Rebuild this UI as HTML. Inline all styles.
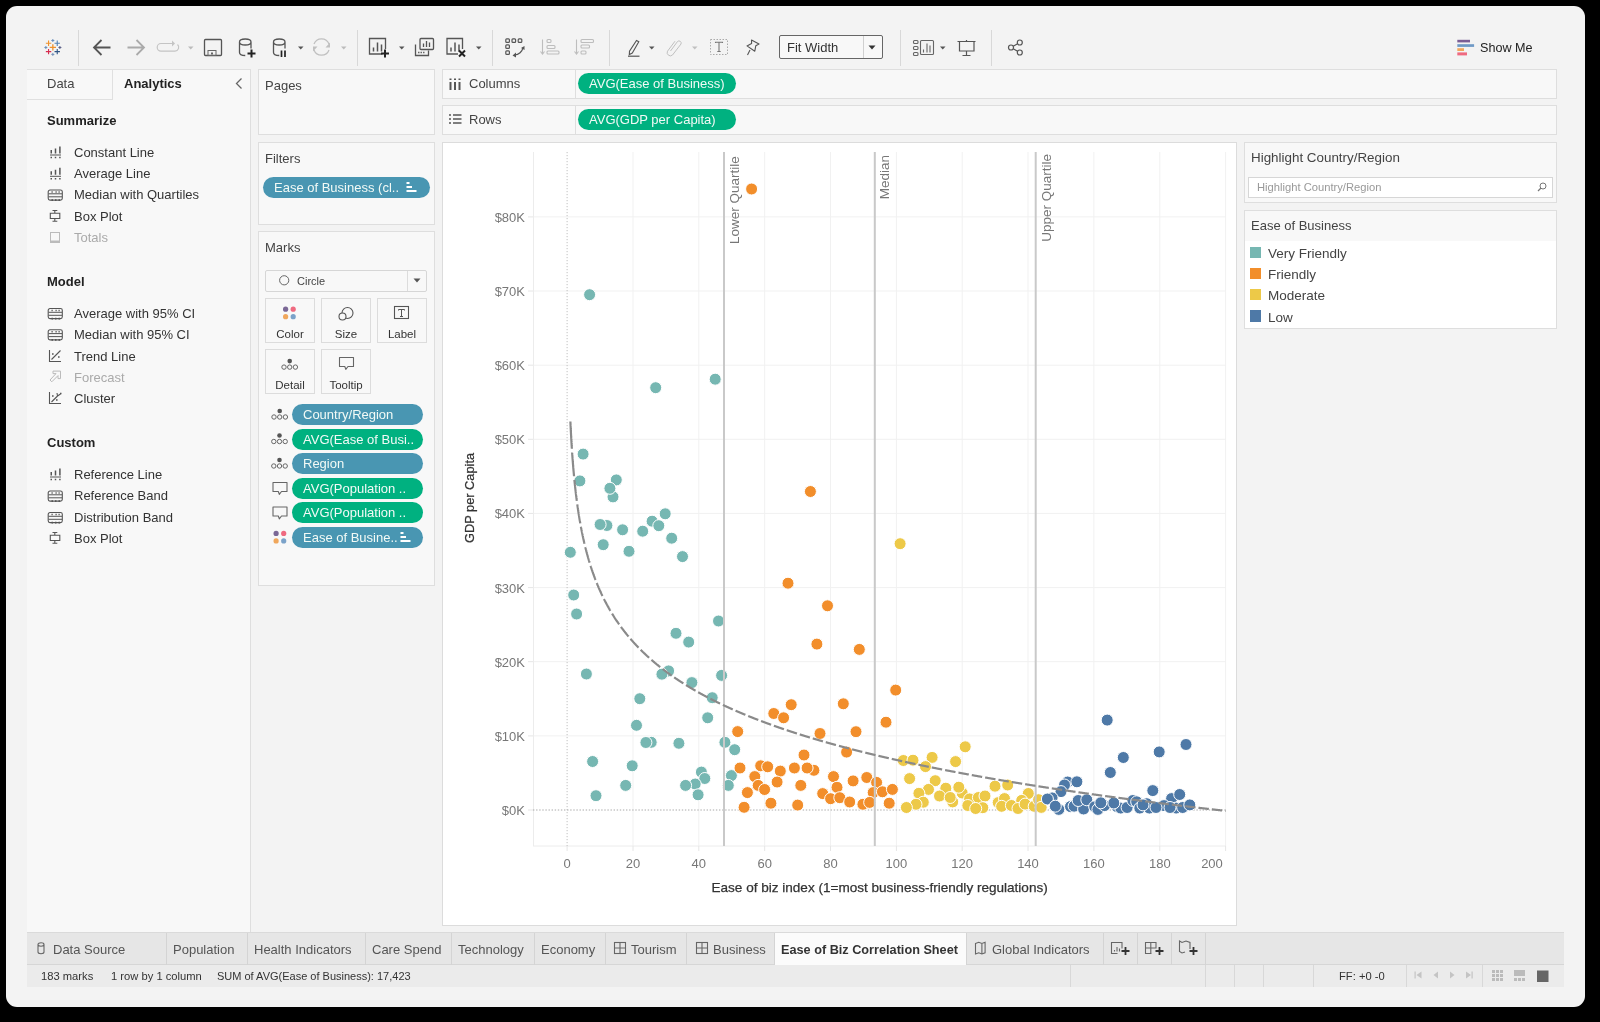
<!DOCTYPE html>
<html><head><meta charset="utf-8">
<style>
*{box-sizing:border-box;margin:0;padding:0}
html,body{width:1600px;height:1022px;overflow:hidden;background:#000;font-family:"Liberation Sans",sans-serif;color:#333}
.a{position:absolute}
#win{position:absolute;left:6px;top:6px;width:1579px;height:1001px;background:#f3f3f3;border-radius:11px;overflow:hidden}
.t{position:absolute;white-space:nowrap;font-size:13px;line-height:16px}
.sep{position:absolute;top:30px;width:1px;height:36px;background:#d8d8d8}
.card{position:absolute;background:#f8f8f8;border:1px solid #dedede}
.pill{position:absolute;height:21px;border-radius:11px;color:#f2faf6;font-size:13px;line-height:21px;white-space:nowrap;padding-left:11px}
.pg{background:#00b180}
.pb{background:#4996b2}
.it{position:absolute;left:74px;font-size:13px;color:#333;white-space:nowrap;line-height:16px}
.ic{position:absolute;left:47px}
.hd{position:absolute;left:47px;font-size:13px;font-weight:bold;color:#222;white-space:nowrap;line-height:16px}
.btn{position:absolute;background:#f8f8f8;border:1px solid #dcdcdc;width:50px;height:45px}
.btn span{position:absolute;left:0;right:0;text-align:center;font-size:11.5px;color:#333;bottom:1px;line-height:14px}
.tab{position:absolute;top:933px;height:32px;font-size:13px;color:#555;line-height:34px;white-space:nowrap;border-right:1px solid #d4d4d4}
</style></head><body>
<div id="root" style="position:absolute;left:0;top:0;width:1600px;height:1022px;will-change:transform;overflow:hidden">
<div id="win"></div>
<!-- toolbar -->
<div class="sep" style="left:78px"></div>
<div class="sep" style="left:357px"></div>
<div class="sep" style="left:492px"></div>
<div class="sep" style="left:609px"></div>
<div class="sep" style="left:900px"></div>
<div class="sep" style="left:991px"></div>
<svg class="a" style="left:0;top:0" width="1600" height="70" viewBox="0 0 1600 70">
 <!-- tableau logo -->
 <g stroke-linecap="butt">
  <path d="M52.84 44.3v6.3M49.7 47.47h6.3" stroke="#f0922c" stroke-width="1.3"/>
  <path d="M48.56 40.5v5.4M45.86 43.2h5.4" stroke="#f0922c" stroke-width="1.1"/>
  <path d="M57.24 40.5v5.4M54.54 43.2h5.4" stroke="#5281b5" stroke-width="1.1"/>
  <path d="M48.56 48.9v5.4M45.86 51.63h5.4" stroke="#d62c4f" stroke-width="1.1"/>
  <path d="M57.24 48.9v5.4M54.54 51.63h5.4" stroke="#2f5585" stroke-width="1.1"/>
  <path d="M52.84 39v3M51.34 40.5h3" stroke="#6a8fbd" stroke-width="1"/>
  <path d="M52.84 52.9v3M51.34 54.4h3" stroke="#7290b8" stroke-width="1"/>
  <path d="M45.87 46v3M44.37 47.47h3" stroke="#6a8fbd" stroke-width="1"/>
  <path d="M59.9 46v3M58.4 47.47h3" stroke="#5a5f87" stroke-width="1"/>
 </g>
 <!-- back / forward -->
 <path d="M110.5 47.5H94M101.5 40L94 47.5L101.5 55" fill="none" stroke="#555" stroke-width="1.8"/>
 <path d="M127.5 47.5H144M136.5 40L144 47.5L136.5 55" fill="none" stroke="#aaa" stroke-width="1.8"/>
 <!-- redo loop -->
 <path d="M172 43.5h-11a3.8 3.8 0 0 0 0 7.6h14a3.8 3.8 0 0 0 2.5 -6.6" fill="none" stroke="#c4c4c4" stroke-width="1.2"/>
 <path d="M172 40.5v6l3 -3z" fill="#c4c4c4"/>
 <path d="M188 46.5h5.5l-2.75 3z" fill="#bbb"/>
 <!-- save -->
 <rect x="204.5" y="39.5" width="17" height="16" rx="1" fill="none" stroke="#555" stroke-width="1.3"/>
 <rect x="208" y="50.5" width="8" height="5" fill="none" stroke="#666" stroke-width="1"/>
 <rect x="211" y="52.5" width="2" height="2" fill="#666"/>
 <!-- db + -->
 <path d="M239.5 42v10.5c0 1.7 2.6 3 5.75 3M251 42v6.5M239.5 42c0 -1.7 2.6 -3 5.75 -3s5.75 1.3 5.75 3s-2.6 3 -5.75 3s-5.75 -1.3 -5.75 -3" fill="none" stroke="#555" stroke-width="1.3"/>
 <path d="M251.5 49.5v8M247.5 53.5h8" stroke="#222" stroke-width="2"/>
 <!-- db pause -->
 <path d="M273.5 42v10.5c0 1.7 2.6 3 5.75 3M285 42v6.5M273.5 42c0 -1.7 2.6 -3 5.75 -3s5.75 1.3 5.75 3s-2.6 3 -5.75 3s-5.75 -1.3 -5.75 -3" fill="none" stroke="#555" stroke-width="1.3"/>
 <path d="M281.5 50.5v6.5M285 50.5v6.5" stroke="#222" stroke-width="1.7"/>
 <path d="M298 46.5h5.5l-2.75 3z" fill="#555"/>
 <!-- refresh -->
 <path d="M314 44a8 8 0 0 1 15 0M329 50a8 8 0 0 1 -15 0" fill="none" stroke="#c0c0c0" stroke-width="1.2"/>
 <path d="M330 42.5v5h-4.5z M313 51.5v-5h4.5z" fill="#c0c0c0"/>
 <path d="M341 46.5h5.5l-2.75 3z" fill="#bbb"/>
 <!-- new worksheet -->
 <path d="M385.5 49V38.5h-16v15.5h13" fill="none" stroke="#555" stroke-width="1.3"/>
 <path d="M373.5 47.5v4M377.5 42.5v9M381.5 44.5v7" stroke="#555" stroke-width="1.5"/>
 <path d="M385 49.5v8M381 53.5h8" stroke="#222" stroke-width="2"/>
 <path d="M399 46.5h5.5l-2.75 3z" fill="#555"/>
 <!-- duplicate -->
 <rect x="420" y="38.5" width="13.5" height="11" rx="1" fill="none" stroke="#555" stroke-width="1.3"/>
 <path d="M415.5 44.5v11h13v-5" fill="none" stroke="#555" stroke-width="1.3"/>
 <path d="M423.5 43.5v3.5M426.5 41v6M429.5 42.5v4.5" stroke="#555" stroke-width="1.3"/>
 <path d="M418 52.5h1.5M420.5 52.5h1.5M423 52.5h1.5" stroke="#666" stroke-width="1.5"/>
 <!-- clear sheet -->
 <path d="M462.5 49V38.5h-15.5v15.5h11" fill="none" stroke="#555" stroke-width="1.3"/>
 <path d="M451 47.5v4M455 42.5v9M459 44.5v7" stroke="#555" stroke-width="1.5"/>
 <path d="M459 50.5l6 6M465 50.5l-6 6" stroke="#222" stroke-width="2"/>
 <path d="M476 46.5h5.5l-2.75 3z" fill="#555"/>
 <!-- swap -->
 <g fill="none" stroke="#555" stroke-width="1.2">
  <rect x="505.8" y="38.8" width="3.6" height="3.6" rx=".9"/><rect x="512" y="38.8" width="3.6" height="3.6" rx=".9"/><rect x="518.2" y="38.8" width="3.6" height="3.6" rx=".9"/>
  <rect x="505.8" y="44.8" width="3.6" height="3.6" rx=".9"/><rect x="505.8" y="50.8" width="3.6" height="3.6" rx=".9"/>
  <path d="M514.5 55a9 9 0 0 0 8.5 -7.5"/>
 </g>
 <path d="M512.5 55.5l3.5 -3v5z M524.5 46l-3.5 2l3.5 2z" fill="#555"/>
 <!-- sort asc -->
 <g fill="none" stroke="#bdbdbd" stroke-width="1.1">
  <path d="M542.5 39.5v14"/><path d="M540.5 51.5l2 2.5l2 -2.5"/>
  <rect x="547" y="39.5" width="4" height="3" rx="1"/><rect x="547" y="45.5" width="8" height="3" rx="1"/><rect x="547" y="51" width="12" height="3" rx="1"/>
  <path d="M576.5 39.5v14"/><path d="M574.5 51.5l2 2.5l2 -2.5"/>
  <rect x="581" y="39.5" width="12.5" height="3" rx="1"/><rect x="581" y="45" width="8.5" height="3" rx="1"/><rect x="581" y="51" width="5" height="3" rx="1"/>
 </g>
 <!-- pen -->
 <path d="M636.5 40.5l2.3 1.3l-6.5 11.3l-3 1.5l0.2 -3.3z" fill="none" stroke="#555" stroke-width="1.1"/>
 <path d="M628 56.2h11.5" stroke="#555" stroke-width="1.2"/>
 <path d="M649 46.5h5.5l-2.75 3z" fill="#555"/>
 <!-- clip -->
 <path d="M670.5 51l7 -9.5a2.2 2.2 0 0 1 3.5 2.5l-8.5 11a3.2 3.2 0 0 1 -5 -3.8l7.5 -10" fill="none" stroke="#c0c0c0" stroke-width="1"/>
 <path d="M692 46.5h5.5l-2.75 3z" fill="#c0c0c0"/>
 <!-- text box -->
 <rect x="710.5" y="39.5" width="17" height="15" fill="none" stroke="#aaa" stroke-width="1" stroke-dasharray="1.5 1.5"/>
 <path d="M715.5 43v-0.8h7v0.8M719 42.2v9.3M717.3 51.5h3.4" fill="none" stroke="#777" stroke-width="1.1"/>
 <!-- pin -->
 <path d="M751.5 40l7.5 4l-3.2 1.7l-1 5.5l-7.8 -5.3l4.6 -2.5z M750 50l-2.5 5" fill="none" stroke="#555" stroke-width="1.1" stroke-linejoin="round"/>
 <!-- fit width -->
 <rect x="779.5" y="35.5" width="103" height="23" rx="1.5" fill="#f8f8f8" stroke="#666" stroke-width="1"/>
 <path d="M863.5 36v22" stroke="#d0d0d0" stroke-width="1"/>
 <path d="M868.5 45.5h7l-3.5 4z" fill="#333"/>
 <!-- cards -->
 <g fill="none" stroke="#666" stroke-width="1.1">
  <rect x="913.5" y="40.5" width="4.5" height="3" rx="1"/><rect x="913.5" y="46.5" width="4.5" height="3" rx="1"/><rect x="913.5" y="52.5" width="4.5" height="3" rx="1"/>
  <rect x="920.5" y="40.5" width="13" height="14" rx="1"/>
 </g>
 <path d="M923.5 49.5v3M927 43.5v9M930 45.5v7" stroke="#666" stroke-width="1.1"/>
 <path d="M940 46.5h5.5l-2.75 3z" fill="#555"/>
 <!-- presentation -->
 <path d="M957.5 41.5h18M959.5 41.5v9.5h14.5v-9.5M966.5 51v4.5M962.5 55.5h8M966.5 40v1.5" fill="none" stroke="#555" stroke-width="1.2"/>
 <!-- share -->
 <g fill="none" stroke="#555" stroke-width="1.2">
  <circle cx="1019.8" cy="42.5" r="2.5"/><circle cx="1011" cy="47.5" r="2.5"/><circle cx="1019.8" cy="52.5" r="2.5"/>
  <path d="M1013.2 46.3l4.4 -2.6M1013.2 48.7l4.4 2.6"/>
 </g>
 <!-- show me -->
 <rect x="1457.3" y="39.8" width="12.7" height="2.6" fill="#7b5e95"/>
 <rect x="1457.3" y="44.2" width="16.8" height="2.7" fill="#6f9ac6"/>
 <rect x="1457.3" y="48.2" width="6.7" height="2.8" fill="#f0a75c"/>
 <rect x="1457.3" y="52.4" width="9.7" height="3" fill="#ef6a80"/>
</svg>
<div class="t" style="left:787px;top:39.5px;color:#333">Fit Width</div>
<div class="t" style="left:1480px;top:40px;color:#222;font-size:12.6px">Show Me</div>
<!-- left panel -->
<div class="a" style="left:27px;top:69px;width:224px;height:864px;background:#f8f8f8;border-top:1px solid #e0e0e0;border-right:1px solid #dedede"></div>
<div class="a" style="left:27px;top:69px;width:86px;height:31px;background:#f8f8f8;border-right:1px solid #e0e0e0;border-bottom:1px solid #e0e0e0;border-top:1px solid #e0e0e0"></div>
<div class="t" style="left:47px;top:76px;color:#444">Data</div>
<div class="t" style="left:124px;top:76px;color:#222;font-weight:bold">Analytics</div>
<svg class="a" style="left:230px;top:74px" width="16" height="18"><path d="M11.5 4.5L6.5 9.5L11.5 14.5" fill="none" stroke="#666" stroke-width="1.3"/></svg>
<div class="hd" style="top:113px">Summarize</div>
<div class="hd" style="top:274px">Model</div>
<div class="hd" style="top:435px">Custom</div>
<div class="it" style="top:145px">Constant Line</div>
<div class="it" style="top:166px">Average Line</div>
<div class="it" style="top:187px">Median with Quartiles</div>
<div class="it" style="top:209px">Box Plot</div>
<div class="it" style="top:230px;color:#aaa">Totals</div>
<div class="it" style="top:306px">Average with 95% CI</div>
<div class="it" style="top:327px">Median with 95% CI</div>
<div class="it" style="top:349px">Trend Line</div>
<div class="it" style="top:370px;color:#aaa">Forecast</div>
<div class="it" style="top:391px">Cluster</div>
<div class="it" style="top:467px">Reference Line</div>
<div class="it" style="top:488px">Reference Band</div>
<div class="it" style="top:510px">Distribution Band</div>
<div class="it" style="top:531px">Box Plot</div>
<svg class="a" style="left:0;top:0" width="260" height="560">
 <defs>
  <g id="iconl" fill="none" stroke="#555"><path d="M3.75 3.5v3.5M8 2v5M12.4 0v7" stroke-width="1.5"/><path d="M2.5 8.5h11" stroke-width="1"/><path d="M3 11h1.5M7.25 11h1.5M11.65 11h1.5" stroke-width="1.5"/></g>
  <g id="iconq" fill="none" stroke="#555"><path d="M2.5 0.5h10.5a1.8 1.8 0 0 1 1.8 1.8v6.5a1.8 1.8 0 0 1 -1.8 1.8h-10.5a1.8 1.8 0 0 1 -1.8 -1.8v-6.5a1.8 1.8 0 0 1 1.8 -1.8z" stroke-width="1.1"/><path d="M1 4.3h13.5M1 7.3h13.5" stroke-width="1"/><path d="M4 2.5h1.2M8 2.5h1.2M11 2.5h1.2M4 10.6h1.5M7.5 10.6h1.5M11 10.6h1.5" stroke-width="1.6"/></g>
  <g id="iconb" fill="none" stroke="#555" stroke-width="1.1"><path d="M2.7 0.5h4.8M5 0.5v2.8M0.5 3.3h9.5v5.2h-9.5z M5 8.5v2.8M2.7 11.3h4.8"/></g>
 </defs>
 <use href="#iconl" x="47.5" y="146.5"/>
 <use href="#iconl" x="47.5" y="167.8"/>
 <use href="#iconq" x="47.5" y="189.5"/>
 <use href="#iconb" x="49.8" y="210"/>
 <rect x="50.5" y="232.5" width="9" height="10" fill="none" stroke="#bbb" stroke-width="1"/><rect x="50" y="240.5" width="10" height="2.5" fill="#bbb"/>
 <use href="#iconq" x="47.5" y="308"/>
 <use href="#iconq" x="47.5" y="329.3"/>
 <path d="M49.5 350v11.5h11.5M51.5 359.5l9 -9" fill="none" stroke="#555" stroke-width="1.1"/>
 <path d="M52 354h1.6M58 357h1.6" stroke="#555" stroke-width="1.6"/>
 <path d="M50 380l1.8 1.8l6.2 -6.2v3h2.5v-7.5h-7.5v2.5h3z" fill="none" stroke="#bbb" stroke-width="1"/>
 <path d="M49.5 392v11.5h11.5M51.5 402l6 -6l3 -2M57.5 396l-0.5 -3" fill="none" stroke="#555" stroke-width="1.1"/>
 <path d="M52 396h1.6M56 400h1.6M60 393.5h1.5" stroke="#555" stroke-width="1.6"/>
 <use href="#iconl" x="47.5" y="468.5"/>
 <use href="#iconq" x="47.5" y="490.5"/>
 <use href="#iconq" x="47.5" y="512"/>
 <use href="#iconb" x="49.8" y="532"/>
</svg>
<!-- middle cards -->
<div class="card" style="left:258px;top:69px;width:177px;height:66px"></div>
<div class="t" style="left:265px;top:78px;color:#444">Pages</div>
<div class="card" style="left:258px;top:142px;width:177px;height:83px"></div>
<div class="t" style="left:265px;top:151px;color:#444">Filters</div>
<div class="pill pb" style="left:263px;top:177px;width:167px">Ease of Business (cl..</div>
<div class="card" style="left:258px;top:231px;width:177px;height:355px"></div>
<div class="t" style="left:265px;top:240px;color:#444">Marks</div>
<div class="a" style="left:265px;top:270px;width:162px;height:22px;background:#f8f8f8;border:1px solid #d6d6d6;border-radius:2px"></div>
<div class="a" style="left:407px;top:271px;width:1px;height:20px;background:#dcdcdc"></div>
<div class="t" style="left:297px;top:273px;font-size:11px;color:#444">Circle</div>
<div class="btn" style="left:265px;top:298px"><span>Color</span></div>
<div class="btn" style="left:321px;top:298px"><span>Size</span></div>
<div class="btn" style="left:377px;top:298px"><span>Label</span></div>
<div class="btn" style="left:265px;top:349px"><span>Detail</span></div>
<div class="btn" style="left:321px;top:349px"><span>Tooltip</span></div>
<div class="pill pb" style="left:292px;top:404px;width:131px">Country/Region</div>
<div class="pill pg" style="left:292px;top:428.7px;width:131px">AVG(Ease of Busi..</div>
<div class="pill pb" style="left:292px;top:453.2px;width:131px">Region</div>
<div class="pill pg" style="left:292px;top:477.7px;width:131px">AVG(Population ..</div>
<div class="pill pg" style="left:292px;top:502.3px;width:131px">AVG(Population ..</div>
<div class="pill pb" style="left:292px;top:526.8px;width:131px">Ease of Busine..</div>
<svg class="a" style="left:0;top:0" width="440" height="560">
 <defs>
  <g id="detail"><circle cx="8.5" cy="2.5" r="2.3" fill="#555"/><circle cx="2.8" cy="8.5" r="2.2" fill="none" stroke="#666" stroke-width="1"/><circle cx="8.5" cy="8.5" r="2.2" fill="none" stroke="#666" stroke-width="1"/><circle cx="14.2" cy="8.5" r="2.2" fill="none" stroke="#666" stroke-width="1"/></g>
  <g id="tip"><path d="M1 1.5h14v9h-5.5l-2.2 2.8l-1 -2.8h-5.3z" fill="none" stroke="#666" stroke-width="1.1" stroke-linejoin="round"/></g>
  <g id="colr"><circle cx="2.6" cy="2.6" r="2.6" fill="#7b6896"/><circle cx="10.2" cy="2.6" r="2.6" fill="#ef6a80"/><circle cx="2.6" cy="10.1" r="2.6" fill="#f0a75c"/><circle cx="10.2" cy="10.1" r="2.6" fill="#7ba2c9"/></g>
  <g id="sorti"><path d="M0 1h3M0 5h5.5M0 9h10" stroke="#fff" stroke-width="1.8"/></g>
 </defs>
 <circle cx="284.2" cy="280.3" r="4.6" fill="none" stroke="#666" stroke-width="1"/>
 <path d="M413.5 278.5h7l-3.5 4z" fill="#555"/>
 <use href="#colr" x="283" y="306.6"/>
 <g fill="none" stroke="#555" stroke-width="1.1"><circle cx="347.5" cy="313" r="5.5"/><circle cx="342.5" cy="316.5" r="3.5" fill="#f8f8f8"/></g>
 <rect x="394.5" y="306.5" width="14" height="12" fill="none" stroke="#555" stroke-width="1.1"/>
 <path d="M398.5 310.5v-1h6v1M401.5 309.5v7M400 316.5h3" fill="none" stroke="#555" stroke-width="1"/>
 <use href="#detail" x="281.2" y="358.6"/>
 <use href="#tip" x="338.5" y="356"/>
 <use href="#detail" x="271.2" y="408.5"/>
 <use href="#detail" x="271" y="433"/>
 <use href="#detail" x="271" y="457.5"/>
 <use href="#tip" x="272" y="481"/>
 <use href="#tip" x="272" y="505.5"/>
 <use href="#colr" x="273.5" y="530.8"/>
 <use href="#sorti" x="406.5" y="182"/>
 <use href="#sorti" x="400.5" y="532"/>
</svg>
<!-- shelves -->
<div class="card" style="left:442px;top:69px;width:1115px;height:30px"></div>
<div class="a" style="left:575px;top:70px;width:1px;height:28px;background:#dedede"></div>
<div class="t" style="left:469px;top:76px;color:#444">Columns</div>
<div class="pill pg" style="left:578px;top:73px;width:158px">AVG(Ease of Business)</div>
<div class="card" style="left:442px;top:105px;width:1115px;height:30px"></div>
<div class="a" style="left:575px;top:106px;width:1px;height:28px;background:#dedede"></div>
<div class="t" style="left:469px;top:112px;color:#444">Rows</div>
<div class="pill pg" style="left:578px;top:109px;width:158px">AVG(GDP per Capita)</div>
<svg class="a" style="left:440px;top:70px" width="30" height="70">
 <path d="M10.5 8.5v1.6M15 8.5v1.6M19.5 8.5v1.6M10.5 12v8M15 12v8M19.5 12v8" stroke="#555" stroke-width="2"/>
 <path d="M9 45h2M9 49h2M9 53h2M13 45h8.5M13 49h8.5M13 53h8.5" stroke="#555" stroke-width="1.6"/>
</svg>
<!-- right panel -->
<div class="card" style="left:1244px;top:142px;width:313px;height:61px"></div>
<div class="t" style="left:1251px;top:150px;color:#444;font-size:13.4px">Highlight Country/Region</div>
<div class="a" style="left:1248px;top:177px;width:305px;height:21px;background:#fff;border:1px solid #d6d6d6"></div>
<div class="t" style="left:1257px;top:180px;color:#999;font-size:11.2px;line-height:14px">Highlight Country/Region</div>
<svg class="a" style="left:1535px;top:180px" width="14" height="14"><circle cx="8" cy="6" r="3" fill="none" stroke="#777" stroke-width="1"/><path d="M6 8l-3 3" stroke="#777" stroke-width="1.2"/></svg>
<div class="card" style="left:1244px;top:210px;width:313px;height:119px;background:#fff"></div>
<div class="a" style="left:1245px;top:211px;width:311px;height:30px;background:#f8f8f8"></div>
<div class="t" style="left:1251px;top:218px;color:#444">Ease of Business</div>
<div class="a" style="left:1250px;top:246.5px;width:11.3px;height:11.3px;background:#76b7b2"></div>
<div class="a" style="left:1250px;top:267.8px;width:11.3px;height:11.3px;background:#f28e2b"></div>
<div class="a" style="left:1250px;top:289px;width:11.3px;height:11.3px;background:#edc948"></div>
<div class="a" style="left:1250px;top:310.3px;width:11.3px;height:11.3px;background:#4e79a7"></div>
<div class="t" style="left:1268px;top:245.8px;color:#444;font-size:13.5px">Very Friendly</div>
<div class="t" style="left:1268px;top:267px;color:#444;font-size:13.5px">Friendly</div>
<div class="t" style="left:1268px;top:288.3px;color:#444;font-size:13.5px">Moderate</div>
<div class="t" style="left:1268px;top:309.6px;color:#444;font-size:13.5px">Low</div>
<div class="a" style="left:442px;top:142px;width:795px;height:784px;background:#fff;border:1px solid #dcdcdc"></div>
<svg class="a" style="left:0;top:0" width="1600" height="1022" viewBox="0 0 1600 1022">
<path d="M633.0 152V846 M698.8 152V846 M764.7 152V846 M830.5 152V846 M896.4 152V846 M962.2 152V846 M1028.0 152V846 M1093.9 152V846 M1159.8 152V846 M1225.6 152V846 M533 735.9H1226 M533 661.7H1226 M533 587.6H1226 M533 513.4H1226 M533 439.3H1226 M533 365.2H1226 M533 291.0H1226 M533 216.9H1226" stroke="#f1f1f1" stroke-width="1" fill="none"/>
<path d="M533.5 152V846M533 846H1226" stroke="#ececec" stroke-width="1" fill="none"/>
<path d="M567.1 846V851 M633.0 846V851 M698.8 846V851 M764.7 846V851 M830.5 846V851 M896.4 846V851 M962.2 846V851 M1028.0 846V851 M1093.9 846V851 M1159.8 846V851 M1225.6 846V851 M528 810.0H533 M528 735.9H533 M528 661.7H533 M528 587.6H533 M528 513.4H533 M528 439.3H533 M528 365.2H533 M528 291.0H533 M528 216.9H533" stroke="#e6e6e6" stroke-width="1" fill="none"/>
<path d="M567.1 152V846" stroke="#c0c0c0" stroke-width="1" stroke-dasharray="1.2 1.8" fill="none"/>
<path d="M533 810.0H1226" stroke="#a8a8a8" stroke-width="1" stroke-dasharray="1.4 1.7" fill="none"/>
<g stroke="#fff" stroke-width="1">
<g fill="#76b7b2"><circle cx="589.6" cy="294.7" r="6"/><circle cx="655.7" cy="387.7" r="6"/><circle cx="715.2" cy="379.2" r="6"/><circle cx="583.1" cy="454.1" r="6"/><circle cx="579.9" cy="480.9" r="6"/><circle cx="616.3" cy="479.9" r="6"/><circle cx="613" cy="496.9" r="6"/><circle cx="609.9" cy="488.3" r="6"/><circle cx="606.9" cy="525.5" r="6"/><circle cx="600.1" cy="524.5" r="6"/><circle cx="622.6" cy="529.8" r="6"/><circle cx="642.7" cy="531.2" r="6"/><circle cx="665.2" cy="513.8" r="6"/><circle cx="652.1" cy="521.2" r="6"/><circle cx="658.8" cy="525.7" r="6"/><circle cx="671.7" cy="538.2" r="6"/><circle cx="682.5" cy="556.6" r="6"/><circle cx="603.2" cy="544.7" r="6"/><circle cx="629" cy="551.3" r="6"/><circle cx="570.3" cy="552.3" r="6"/><circle cx="573.7" cy="595" r="6"/><circle cx="576.6" cy="614" r="6"/><circle cx="718.5" cy="621" r="6"/><circle cx="676" cy="633.3" r="6"/><circle cx="688.7" cy="642.1" r="6"/><circle cx="586.4" cy="674" r="6"/><circle cx="668.6" cy="670.9" r="6"/><circle cx="661.9" cy="674.2" r="6"/><circle cx="721.6" cy="675.4" r="6"/><circle cx="691.9" cy="682.6" r="6"/><circle cx="712.2" cy="697.7" r="6"/><circle cx="639.8" cy="698.7" r="6"/><circle cx="707.7" cy="717.8" r="6"/><circle cx="636.5" cy="725.3" r="6"/><circle cx="651.2" cy="742.3" r="6"/><circle cx="645.9" cy="742.5" r="6"/><circle cx="678.9" cy="743.3" r="6"/><circle cx="724.9" cy="742.3" r="6"/><circle cx="734.7" cy="749.7" r="6"/><circle cx="592.6" cy="761.5" r="6"/><circle cx="632.2" cy="765.8" r="6"/><circle cx="701.4" cy="772.1" r="6"/><circle cx="704.8" cy="778.5" r="6"/><circle cx="731.4" cy="775.6" r="6"/><circle cx="625.7" cy="785.4" r="6"/><circle cx="695.2" cy="784" r="6"/><circle cx="685.6" cy="785.4" r="6"/><circle cx="698.1" cy="794.8" r="6"/><circle cx="728.3" cy="785.4" r="6"/><circle cx="596" cy="795.7" r="6"/></g>
<g fill="#f28e2b"><circle cx="751.6" cy="189" r="6"/><circle cx="810.4" cy="491.5" r="6"/><circle cx="788" cy="583.2" r="6"/><circle cx="827.5" cy="605.8" r="6"/><circle cx="816.9" cy="644.1" r="6"/><circle cx="859.3" cy="649.4" r="6"/><circle cx="895.7" cy="690.1" r="6"/><circle cx="791.2" cy="704.7" r="6"/><circle cx="773.8" cy="713.5" r="6"/><circle cx="783.6" cy="717.8" r="6"/><circle cx="843.3" cy="703.8" r="6"/><circle cx="886" cy="722.2" r="6"/><circle cx="737.7" cy="731.6" r="6"/><circle cx="820" cy="733.5" r="6"/><circle cx="856" cy="731.7" r="6"/><circle cx="846.6" cy="752.1" r="6"/><circle cx="804" cy="755" r="6"/><circle cx="740" cy="768" r="6"/><circle cx="760.7" cy="765.8" r="6"/><circle cx="767.7" cy="766.8" r="6"/><circle cx="780.3" cy="771.1" r="6"/><circle cx="794.4" cy="768" r="6"/><circle cx="813.9" cy="770.3" r="6"/><circle cx="807.1" cy="768" r="6"/><circle cx="754.8" cy="776.6" r="6"/><circle cx="758.2" cy="785.4" r="6"/><circle cx="764.6" cy="789.5" r="6"/><circle cx="777.1" cy="782" r="6"/><circle cx="747.4" cy="792.6" r="6"/><circle cx="800.8" cy="785.4" r="6"/><circle cx="833.5" cy="776.6" r="6"/><circle cx="837" cy="787.3" r="6"/><circle cx="853.1" cy="780.9" r="6"/><circle cx="866.8" cy="777.5" r="6"/><circle cx="876.6" cy="782.4" r="6"/><circle cx="873.2" cy="792.6" r="6"/><circle cx="882.4" cy="791.8" r="6"/><circle cx="892.4" cy="789.4" r="6"/><circle cx="822.7" cy="793.6" r="6"/><circle cx="830.6" cy="798.7" r="6"/><circle cx="839.8" cy="797.7" r="6"/><circle cx="849.7" cy="802" r="6"/><circle cx="862.9" cy="804.3" r="6"/><circle cx="869.7" cy="802.4" r="6"/><circle cx="889.2" cy="803.2" r="6"/><circle cx="744.1" cy="807.3" r="6"/><circle cx="770.9" cy="803.2" r="6"/><circle cx="797.7" cy="805.1" r="6"/></g>
<g fill="#edc948"><circle cx="900.1" cy="543.7" r="6"/><circle cx="965.2" cy="746.8" r="6"/><circle cx="932.1" cy="757.4" r="6"/><circle cx="955.6" cy="761.6" r="6"/><circle cx="903.3" cy="760.5" r="6"/><circle cx="913" cy="760.2" r="6"/><circle cx="925.5" cy="766.6" r="6"/><circle cx="909.6" cy="778.6" r="6"/><circle cx="935.2" cy="780.7" r="6"/><circle cx="995" cy="786.2" r="6"/><circle cx="1007.7" cy="785" r="6"/><circle cx="1028.3" cy="793.5" r="6"/><circle cx="928.5" cy="789.4" r="6"/><circle cx="918.9" cy="793.3" r="6"/><circle cx="945.8" cy="788.2" r="6"/><circle cx="962.2" cy="793" r="6"/><circle cx="958.8" cy="787.2" r="6"/><circle cx="939.5" cy="796" r="6"/><circle cx="952.7" cy="801.9" r="6"/><circle cx="950.2" cy="797.5" r="6"/><circle cx="923.3" cy="802.2" r="6"/><circle cx="916" cy="804.3" r="6"/><circle cx="906.4" cy="807.5" r="6"/><circle cx="969.6" cy="798.9" r="6"/><circle cx="978.4" cy="797.5" r="6"/><circle cx="985" cy="796" r="6"/><circle cx="967.8" cy="805.5" r="6"/><circle cx="982.8" cy="807.7" r="6"/><circle cx="975.7" cy="808.5" r="6"/><circle cx="998.2" cy="802.6" r="6"/><circle cx="1004.5" cy="798.6" r="6"/><circle cx="1001.6" cy="806.3" r="6"/><circle cx="1011.4" cy="805.5" r="6"/><circle cx="1021.7" cy="800.4" r="6"/><circle cx="1018" cy="808.5" r="6"/><circle cx="1025.1" cy="804.1" r="6"/><circle cx="1034.2" cy="806.3" r="6"/><circle cx="1038.6" cy="799.7" r="6"/><circle cx="1041.2" cy="807.4" r="6"/></g>
<g fill="#4e79a7"><circle cx="1107.2" cy="720.1" r="6"/><circle cx="1186" cy="744.5" r="6"/><circle cx="1159.2" cy="751.9" r="6"/><circle cx="1123.3" cy="757.5" r="6"/><circle cx="1110.3" cy="772.5" r="6"/><circle cx="1152.8" cy="790.6" r="6"/><circle cx="1171.6" cy="798.6" r="6"/><circle cx="1179.7" cy="794.5" r="6"/><circle cx="1067.7" cy="782" r="6"/><circle cx="1076.9" cy="781.8" r="6"/><circle cx="1064.5" cy="785" r="6"/><circle cx="1061" cy="791.6" r="6"/><circle cx="1052.1" cy="797.9" r="6"/><circle cx="1047.4" cy="799" r="6"/><circle cx="1058.8" cy="809.4" r="6"/><circle cx="1055.3" cy="806.2" r="6"/><circle cx="1070.5" cy="806.6" r="6"/><circle cx="1074.1" cy="806.2" r="6"/><circle cx="1083.6" cy="809" r="6"/><circle cx="1078.2" cy="800.5" r="6"/><circle cx="1086.8" cy="799.8" r="6"/><circle cx="1094.7" cy="806.8" r="6"/><circle cx="1097.9" cy="809.4" r="6"/><circle cx="1104.6" cy="805.6" r="6"/><circle cx="1100.8" cy="802.8" r="6"/><circle cx="1117" cy="806.6" r="6"/><circle cx="1120.8" cy="808.1" r="6"/><circle cx="1113.8" cy="803" r="6"/><circle cx="1127.1" cy="807.5" r="6"/><circle cx="1132.9" cy="800.5" r="6"/><circle cx="1136.7" cy="801.8" r="6"/><circle cx="1139.8" cy="808.1" r="6"/><circle cx="1146.8" cy="803.7" r="6"/><circle cx="1149.4" cy="808.1" r="6"/><circle cx="1143" cy="804.9" r="6"/><circle cx="1164" cy="805.6" r="6"/><circle cx="1156" cy="807.5" r="6"/><circle cx="1176.1" cy="808.1" r="6"/><circle cx="1170" cy="807.5" r="6"/><circle cx="1182.7" cy="807.5" r="6"/><circle cx="1189.8" cy="804.9" r="6"/></g>
</g>
<path d="M724 152V846M874.8 152V846M1035.7 152V846" stroke="#c9c9c9" stroke-width="2" fill="none"/>
<path d="M570.39 421.43 L570.40 421.65 L570.41 421.87 L570.42 422.09 L570.43 422.31 L570.44 422.53 L570.45 422.75 L570.46 422.97 L570.47 423.19 L570.48 423.41 L570.49 423.63 L570.50 423.85 L570.51 424.07 L570.52 424.29 L570.53 424.51 L570.54 424.73 L570.55 424.96 L570.56 425.18 L570.57 425.40 L570.59 425.62 L570.60 425.84 L570.61 426.06 L570.62 426.28 L570.63 426.50 L570.64 426.72 L570.65 426.94 L570.66 427.16 L570.67 427.38 L570.68 427.60 L570.69 427.82 L570.70 428.04 L570.71 428.26 L570.72 428.48 L570.73 428.70 L570.75 428.92 L570.76 429.14 L570.77 429.36 L570.78 429.58 L570.79 429.80 L570.80 430.02 L570.81 430.24 L570.82 430.46 L570.83 430.68 L570.85 430.90 L570.86 431.12 L570.87 431.34 L570.88 431.56 L570.89 431.78 L570.90 432.00 L570.91 432.22 L570.92 432.44 L570.94 432.66 L570.95 432.88 L570.96 433.10 L570.97 433.32 L570.98 433.54 L570.99 433.76 L571.01 433.98 L571.02 434.20 L571.03 434.42 L571.04 434.64 L571.05 434.86 L571.06 435.08 L571.08 435.30 L571.09 435.52 L571.10 435.74 L571.11 435.96 L571.12 436.18 L571.14 436.40 L571.15 436.62 L571.16 436.84 L571.17 437.06 L571.19 437.29 L571.20 437.51 L571.21 437.73 L571.22 437.95 L571.23 438.17 L571.25 438.39 L571.26 438.61 L571.27 438.83 L571.28 439.05 L571.30 439.27 L571.31 439.49 L571.32 439.71 L571.33 439.93 L571.35 440.15 L571.36 440.37 L571.37 440.59 L571.39 440.81 L571.40 441.03 L571.41 441.25 L571.42 441.47 L571.44 441.69 L571.45 441.91 L571.46 442.13 L571.48 442.35 L571.49 442.57 L571.50 442.79 L571.52 443.01 L571.53 443.23 L571.54 443.45 L571.56 443.67 L571.57 443.89 L571.58 444.11 L571.60 444.33 L571.61 444.55 L571.62 444.77 L571.64 444.99 L571.65 445.21 L571.66 445.43 L571.68 445.65 L571.69 445.87 L571.71 446.09 L571.72 446.31 L571.73 446.53 L571.75 446.75 L571.76 446.97 L571.77 447.19 L571.79 447.41 L571.80 447.63 L571.82 447.85 L571.83 448.07 L571.85 448.29 L571.86 448.51 L571.87 448.73 M572.12 452.48 L572.14 452.70 L572.15 452.92 L572.17 453.14 L572.18 453.36 L572.20 453.58 L572.21 453.80 L572.23 454.02 L572.24 454.24 L572.26 454.46 L572.28 454.68 L572.29 454.90 L572.31 455.12 L572.32 455.34 L572.34 455.56 L572.35 455.78 L572.37 456.00 L572.39 456.22 L572.40 456.44 L572.42 456.66 L572.43 456.88 L572.45 457.10 L572.47 457.32 L572.48 457.54 L572.50 457.76 L572.51 457.98 L572.53 458.20 L572.55 458.42 L572.56 458.64 L572.58 458.86 L572.60 459.08 L572.61 459.30 L572.63 459.52 L572.64 459.74 L572.66 459.96 L572.68 460.18 L572.69 460.40 L572.71 460.62 L572.73 460.84 L572.75 461.06 L572.76 461.28 L572.78 461.50 L572.80 461.72 L572.81 461.94 L572.83 462.17 L572.85 462.39 L572.87 462.61 L572.88 462.83 L572.90 463.05 L572.92 463.27 L572.93 463.49 L572.95 463.71 L572.97 463.93 L572.99 464.15 L573.00 464.37 L573.02 464.59 L573.04 464.81 L573.06 465.03 L573.08 465.25 L573.09 465.47 L573.11 465.69 L573.13 465.91 L573.15 466.13 L573.17 466.35 L573.18 466.57 L573.20 466.79 L573.22 467.01 L573.24 467.23 L573.26 467.45 L573.28 467.67 L573.29 467.89 L573.31 468.11 L573.33 468.33 L573.35 468.55 L573.37 468.77 L573.39 468.99 L573.41 469.21 L573.43 469.43 L573.44 469.65 L573.46 469.87 L573.48 470.09 L573.50 470.31 L573.52 470.53 L573.54 470.75 L573.56 470.97 L573.58 471.19 L573.60 471.41 L573.62 471.63 L573.64 471.85 L573.66 472.07 L573.68 472.29 L573.70 472.51 L573.72 472.73 L573.74 472.95 L573.76 473.17 L573.78 473.39 L573.80 473.61 L573.82 473.83 L573.84 474.05 L573.86 474.27 L573.88 474.49 L573.90 474.72 L573.92 474.94 L573.94 475.16 L573.96 475.38 L573.98 475.60 L574.00 475.82 L574.02 476.04 L574.04 476.26 M574.38 479.78 L574.40 480.00 L574.43 480.22 L574.45 480.44 L574.47 480.66 L574.49 480.88 L574.51 481.10 L574.54 481.32 L574.56 481.54 L574.58 481.76 L574.60 481.98 L574.63 482.20 L574.65 482.42 L574.67 482.64 L574.69 482.86 L574.72 483.08 L574.74 483.30 L574.76 483.52 L574.79 483.74 L574.81 483.96 L574.83 484.18 L574.86 484.40 L574.88 484.62 L574.90 484.84 L574.93 485.06 L574.95 485.28 L574.97 485.50 L575.00 485.72 L575.02 485.94 L575.04 486.16 L575.07 486.38 L575.09 486.60 L575.11 486.82 L575.14 487.05 L575.16 487.27 L575.19 487.49 L575.21 487.71 L575.24 487.93 L575.26 488.15 L575.28 488.37 L575.31 488.59 L575.33 488.81 L575.36 489.03 L575.38 489.25 L575.41 489.47 L575.43 489.69 L575.46 489.91 L575.48 490.13 L575.51 490.35 L575.53 490.57 L575.56 490.79 L575.58 491.01 L575.61 491.23 L575.64 491.45 L575.66 491.67 L575.69 491.89 L575.71 492.11 L575.74 492.33 L575.76 492.55 L575.79 492.77 L575.82 492.99 L575.84 493.21 L575.87 493.43 L575.89 493.65 L575.92 493.87 L575.95 494.09 L575.97 494.31 L576.00 494.53 L576.03 494.75 L576.05 494.97 L576.08 495.19 L576.11 495.41 L576.14 495.63 L576.16 495.85 L576.19 496.07 L576.22 496.29 L576.24 496.51 L576.27 496.73 L576.30 496.95 L576.33 497.17 L576.35 497.39 L576.38 497.61 L576.41 497.83 L576.44 498.05 L576.47 498.27 L576.49 498.49 L576.52 498.71 L576.55 498.93 L576.58 499.15 L576.61 499.37 L576.64 499.60 L576.66 499.82 L576.69 500.04 L576.72 500.26 L576.75 500.48 L576.78 500.70 L576.81 500.92 M577.29 504.44 L577.32 504.66 L577.35 504.88 L577.38 505.10 L577.41 505.32 L577.44 505.54 L577.47 505.76 L577.50 505.98 L577.53 506.20 L577.56 506.42 L577.60 506.64 L577.63 506.86 L577.66 507.08 L577.69 507.30 L577.72 507.52 L577.75 507.74 L577.79 507.96 L577.82 508.18 L577.85 508.40 L577.88 508.62 L577.91 508.84 L577.95 509.06 L577.98 509.28 L578.01 509.50 L578.04 509.72 L578.08 509.94 L578.11 510.16 L578.14 510.38 L578.18 510.60 L578.21 510.82 L578.24 511.04 L578.28 511.26 L578.31 511.48 L578.34 511.70 L578.38 511.93 L578.41 512.15 L578.45 512.37 L578.48 512.59 L578.51 512.81 L578.55 513.03 L578.58 513.25 L578.62 513.47 L578.65 513.69 L578.69 513.91 L578.72 514.13 L578.76 514.35 L578.79 514.57 L578.83 514.79 L578.86 515.01 L578.90 515.23 L578.93 515.45 L578.97 515.67 L579.00 515.89 L579.04 516.11 L579.07 516.33 L579.11 516.55 L579.15 516.77 L579.18 516.99 L579.22 517.21 L579.25 517.43 L579.29 517.65 L579.33 517.87 L579.36 518.09 L579.40 518.31 L579.44 518.53 L579.47 518.75 L579.51 518.97 L579.55 519.19 L579.59 519.41 L579.62 519.63 L579.66 519.85 L579.70 520.07 L579.74 520.29 L579.77 520.51 L579.81 520.73 L579.85 520.95 L579.89 521.17 L579.93 521.39 L579.97 521.61 L580.00 521.83 L580.04 522.05 L580.08 522.27 L580.12 522.49 L580.16 522.71 L580.20 522.93 L580.24 523.15 L580.28 523.37 M580.88 526.68 L580.93 526.90 L580.97 527.12 L581.01 527.34 L581.05 527.56 L581.09 527.78 L581.13 528.00 L581.18 528.22 L581.22 528.44 L581.26 528.66 L581.30 528.88 L581.35 529.10 L581.39 529.32 L581.43 529.54 L581.47 529.76 L581.52 529.98 L581.56 530.20 L581.60 530.42 L581.65 530.64 L581.69 530.86 L581.73 531.08 L581.78 531.30 L581.82 531.52 L581.87 531.74 L581.91 531.96 L581.96 532.18 L582.00 532.40 L582.05 532.62 L582.09 532.84 L582.13 533.06 L582.18 533.28 L582.23 533.50 L582.27 533.72 L582.32 533.94 L582.36 534.16 L582.41 534.38 L582.45 534.60 L582.50 534.82 L582.55 535.04 L582.59 535.26 L582.64 535.48 L582.69 535.70 L582.73 535.92 L582.78 536.14 L582.83 536.36 L582.87 536.58 L582.92 536.81 L582.97 537.03 L583.02 537.25 L583.06 537.47 L583.11 537.69 L583.16 537.91 L583.21 538.13 L583.26 538.35 L583.30 538.57 L583.35 538.79 L583.40 539.01 L583.45 539.23 L583.50 539.45 L583.55 539.67 L583.60 539.89 L583.65 540.11 L583.70 540.33 L583.75 540.55 L583.80 540.77 L583.85 540.99 L583.90 541.21 L583.95 541.43 L584.00 541.65 L584.05 541.87 L584.10 542.09 L584.15 542.31 L584.20 542.53 L584.25 542.75 L584.30 542.97 L584.36 543.19 L584.41 543.41 L584.46 543.63 L584.51 543.85 M585.31 547.15 L585.37 547.37 L585.42 547.59 L585.48 547.81 L585.53 548.03 L585.59 548.25 L585.64 548.47 L585.70 548.69 L585.75 548.91 L585.81 549.13 L585.87 549.36 L585.92 549.58 L585.98 549.80 L586.04 550.02 L586.09 550.24 L586.15 550.46 L586.21 550.68 L586.26 550.90 L586.32 551.12 L586.38 551.34 L586.44 551.56 L586.49 551.78 L586.55 552.00 L586.61 552.22 L586.67 552.44 L586.73 552.66 L586.79 552.88 L586.85 553.10 L586.91 553.32 L586.96 553.54 L587.02 553.76 L587.08 553.98 L587.14 554.20 L587.20 554.42 L587.26 554.64 L587.33 554.86 L587.39 555.08 L587.45 555.30 L587.51 555.52 L587.57 555.74 L587.63 555.96 L587.69 556.18 L587.75 556.40 L587.82 556.62 L587.88 556.84 L587.94 557.06 L588.00 557.28 L588.07 557.50 L588.13 557.72 L588.19 557.94 L588.25 558.16 L588.32 558.38 L588.38 558.60 L588.45 558.82 L588.51 559.04 L588.57 559.26 L588.64 559.48 L588.70 559.70 L588.77 559.92 L588.83 560.14 L588.90 560.36 L588.96 560.58 L589.03 560.80 L589.09 561.02 L589.16 561.24 L589.23 561.46 L589.29 561.69 L589.36 561.91 L589.43 562.13 L589.49 562.35 L589.56 562.57 L589.63 562.79 M590.59 565.87 L590.66 566.09 L590.73 566.31 L590.81 566.53 L590.88 566.75 L590.95 566.97 L591.02 567.19 L591.09 567.41 L591.16 567.63 L591.23 567.85 L591.31 568.07 L591.38 568.29 L591.45 568.51 L591.53 568.73 L591.60 568.95 L591.67 569.17 L591.75 569.39 L591.82 569.61 L591.89 569.83 L591.97 570.05 L592.04 570.27 L592.12 570.49 L592.19 570.71 L592.27 570.93 L592.34 571.15 L592.42 571.37 L592.50 571.59 L592.57 571.81 L592.65 572.03 L592.73 572.25 L592.80 572.47 L592.88 572.69 L592.96 572.91 L593.03 573.13 L593.11 573.35 L593.19 573.57 L593.27 573.79 L593.35 574.01 L593.43 574.24 L593.50 574.46 L593.58 574.68 L593.66 574.90 L593.74 575.12 L593.82 575.34 L593.90 575.56 L593.98 575.78 L594.06 576.00 L594.14 576.22 L594.23 576.44 L594.31 576.66 L594.39 576.88 L594.47 577.10 L594.55 577.32 L594.64 577.54 L594.72 577.76 L594.80 577.98 L594.88 578.20 L594.97 578.42 L595.05 578.64 L595.13 578.86 L595.22 579.08 L595.30 579.30 L595.39 579.52 L595.47 579.74 L595.56 579.96 M596.78 583.04 L596.87 583.26 L596.95 583.48 L597.04 583.70 L597.13 583.92 L597.22 584.14 L597.31 584.36 L597.41 584.58 L597.50 584.80 L597.59 585.02 L597.68 585.24 L597.77 585.46 L597.86 585.68 L597.95 585.90 L598.05 586.12 L598.14 586.34 L598.23 586.57 L598.33 586.79 L598.42 587.01 L598.51 587.23 L598.61 587.45 L598.70 587.67 L598.80 587.89 L598.89 588.11 L598.99 588.33 L599.08 588.55 L599.18 588.77 L599.28 588.99 L599.37 589.21 L599.47 589.43 L599.57 589.65 L599.66 589.87 L599.76 590.09 L599.86 590.31 L599.96 590.53 L600.06 590.75 L600.22 591.11 L600.39 591.48 L600.55 591.84 L600.72 592.20 L600.88 592.56 L601.04 592.92 L601.21 593.27 L601.37 593.63 L601.54 593.98 L601.70 594.33 L601.87 594.68 L602.03 595.03 L602.20 595.37 L602.36 595.72 L602.53 596.06 M604.01 599.07 L604.17 599.40 L604.34 599.72 L604.50 600.05 L604.67 600.37 L604.83 600.69 L605.00 601.01 L605.16 601.33 L605.32 601.65 L605.49 601.96 L605.65 602.28 L605.82 602.59 L605.98 602.90 L606.15 603.21 L606.31 603.52 L606.48 603.83 L606.64 604.14 L606.81 604.44 L606.97 604.75 L607.14 605.05 L607.30 605.35 L607.46 605.65 L607.63 605.95 L607.79 606.25 L607.96 606.55 L608.12 606.84 L608.29 607.14 L608.45 607.43 L608.62 607.72 L608.78 608.01 L608.95 608.30 L609.11 608.59 L609.28 608.88 L609.44 609.16 L609.60 609.45 L609.77 609.73 L609.93 610.02 L610.10 610.30 L610.26 610.58 L610.43 610.86 M612.07 613.60 L612.24 613.87 L612.40 614.14 L612.57 614.40 L612.73 614.67 L612.90 614.93 L613.06 615.20 L613.23 615.46 L613.39 615.72 L613.56 615.98 L613.72 616.24 L613.89 616.50 L614.05 616.76 L614.21 617.02 L614.38 617.27 L614.54 617.53 L614.71 617.78 L614.87 618.04 L615.04 618.29 L615.20 618.54 L615.37 618.79 L615.53 619.04 L615.70 619.29 L615.86 619.54 L616.03 619.79 L616.19 620.04 L616.35 620.28 L616.52 620.53 L616.68 620.77 L616.85 621.02 L617.01 621.26 L617.18 621.50 L617.34 621.74 L617.51 621.98 L617.67 622.22 L617.84 622.46 L618.00 622.70 L618.17 622.94 L618.33 623.17 L618.49 623.41 L618.66 623.64 L618.82 623.88 L618.99 624.11 L619.15 624.34 M620.96 626.86 L621.13 627.08 L621.29 627.31 L621.46 627.53 L621.62 627.75 L621.79 627.97 L621.95 628.19 L622.12 628.41 L622.28 628.63 L622.45 628.85 L622.61 629.07 L622.77 629.29 L622.94 629.51 L623.10 629.72 L623.27 629.94 L623.43 630.15 L623.60 630.37 L623.76 630.58 L623.93 630.79 L624.09 631.01 L624.26 631.22 L624.42 631.43 L624.59 631.64 L624.75 631.85 L624.92 632.06 L625.08 632.27 L625.24 632.48 L625.41 632.69 L625.57 632.89 L625.74 633.10 L625.90 633.31 L626.07 633.51 L626.23 633.72 L626.40 633.92 L626.56 634.12 L626.73 634.33 L626.89 634.53 L627.06 634.73 L627.22 634.93 L627.38 635.14 L627.55 635.34 L627.71 635.54 L627.88 635.73 L628.04 635.93 L628.21 636.13 L628.37 636.33 L628.54 636.53 M630.51 638.85 L630.68 639.04 L630.84 639.23 L631.01 639.42 L631.17 639.61 L631.34 639.80 L631.50 639.99 L631.66 640.18 L631.83 640.36 L631.99 640.55 L632.16 640.74 L632.32 640.92 L632.49 641.11 L632.65 641.29 L632.82 641.48 L632.98 641.66 L633.15 641.84 L633.31 642.03 L633.48 642.21 L633.64 642.39 L633.80 642.57 L633.97 642.75 L634.13 642.94 L634.30 643.12 L634.46 643.30 L634.63 643.48 L634.79 643.65 L634.96 643.83 L635.12 644.01 L635.29 644.19 L635.45 644.37 L635.62 644.54 L635.78 644.72 L635.94 644.89 L636.11 645.07 L636.27 645.25 L636.44 645.42 L636.60 645.59 L636.77 645.77 L636.93 645.94 L637.10 646.12 L637.26 646.29 L637.43 646.46 L637.59 646.63 L637.76 646.80 L637.92 646.97 L638.09 647.15 L638.25 647.32 L638.41 647.49 L638.58 647.65 M640.72 649.82 L640.88 649.99 L641.05 650.15 L641.21 650.31 L641.38 650.48 L641.54 650.64 L641.71 650.80 L641.87 650.96 L642.04 651.13 L642.20 651.29 L642.37 651.45 L642.53 651.61 L642.69 651.77 L642.86 651.93 L643.02 652.09 L643.19 652.25 L643.35 652.41 L643.52 652.57 L643.68 652.72 L643.85 652.88 L644.01 653.04 L644.18 653.20 L644.34 653.35 L644.51 653.51 L644.67 653.67 L644.83 653.82 L645.00 653.98 L645.16 654.13 L645.33 654.29 L645.49 654.44 L645.66 654.60 L645.82 654.75 L645.99 654.90 L646.15 655.06 L646.32 655.21 L646.48 655.36 L646.65 655.51 L646.81 655.67 L646.97 655.82 L647.14 655.97 L647.30 656.12 L647.47 656.27 L647.63 656.42 L647.80 656.57 L647.96 656.72 L648.13 656.87 L648.29 657.02 L648.46 657.17 L648.62 657.32 L648.79 657.47 L648.95 657.61 L649.11 657.76 M651.42 659.80 L651.58 659.94 L651.75 660.08 L651.91 660.23 L652.08 660.37 L652.24 660.51 L652.41 660.65 L652.57 660.80 L652.74 660.94 L652.90 661.08 L653.07 661.22 L653.23 661.36 L653.40 661.50 L653.56 661.64 L653.72 661.78 L653.89 661.92 L654.05 662.06 L654.22 662.20 L654.38 662.34 L654.55 662.48 L654.71 662.61 L654.88 662.75 L655.04 662.89 L655.21 663.03 L655.37 663.16 L655.54 663.30 L655.70 663.44 L655.86 663.57 L656.03 663.71 L656.19 663.85 L656.36 663.98 L656.52 664.12 L656.69 664.25 L656.85 664.39 L657.02 664.52 L657.18 664.66 L657.35 664.79 L657.51 664.92 L657.68 665.06 L657.84 665.19 L658.00 665.33 L658.17 665.46 L658.33 665.59 L658.50 665.72 L658.66 665.86 L658.83 665.99 L658.99 666.12 L659.16 666.25 L659.32 666.38 L659.49 666.51 L659.65 666.64 L659.82 666.78 L659.98 666.91 L660.14 667.04 M662.61 668.96 L662.78 669.09 L662.94 669.21 L663.11 669.34 L663.27 669.47 L663.44 669.59 L663.60 669.72 L663.77 669.84 L663.93 669.97 L664.10 670.09 L664.26 670.22 L664.43 670.34 L664.59 670.47 L664.75 670.59 L664.92 670.71 L665.08 670.84 L665.25 670.96 L665.41 671.08 L665.58 671.21 L665.74 671.33 L665.91 671.45 L666.07 671.57 L666.24 671.70 L666.40 671.82 L666.57 671.94 L666.73 672.06 L666.89 672.18 L667.06 672.30 L667.22 672.43 L667.39 672.55 L667.55 672.67 L667.72 672.79 L667.88 672.91 L668.05 673.03 L668.21 673.15 L668.38 673.27 L668.54 673.39 L668.71 673.50 L668.87 673.62 L669.03 673.74 L669.20 673.86 L669.36 673.98 L669.53 674.10 L669.69 674.22 L669.86 674.33 L670.02 674.45 L670.19 674.57 L670.35 674.69 L670.52 674.80 L670.68 674.92 L670.85 675.04 L671.01 675.15 L671.17 675.27 L671.34 675.39 L671.50 675.50 L671.67 675.62 M674.14 677.33 L674.30 677.45 L674.47 677.56 L674.63 677.67 L674.80 677.78 L674.96 677.90 L675.13 678.01 L675.29 678.12 L675.45 678.23 L675.62 678.34 L675.78 678.46 L675.95 678.57 L676.11 678.68 L676.28 678.79 L676.44 678.90 L676.61 679.01 L676.77 679.12 L676.94 679.23 L677.10 679.34 L677.27 679.45 L677.43 679.56 L677.60 679.67 L677.76 679.78 L677.92 679.89 L678.09 680.00 L678.25 680.11 L678.42 680.22 L678.58 680.32 L678.75 680.43 L678.91 680.54 L679.08 680.65 L679.24 680.76 L679.41 680.86 L679.57 680.97 L679.74 681.08 L679.90 681.19 L680.06 681.29 L680.23 681.40 L680.39 681.51 L680.56 681.62 L680.72 681.72 L680.89 681.83 L681.05 681.93 L681.22 682.04 L681.38 682.15 L681.55 682.25 L681.71 682.36 L681.88 682.46 L682.04 682.57 L682.20 682.67 L682.37 682.78 L682.53 682.88 L682.70 682.99 L682.86 683.09 L683.03 683.20 L683.19 683.30 L683.36 683.41 M685.99 685.05 L686.16 685.15 L686.32 685.26 L686.48 685.36 L686.65 685.46 L686.81 685.56 L686.98 685.66 L687.14 685.76 L687.31 685.86 L687.47 685.96 L687.64 686.06 L687.80 686.16 L687.97 686.26 L688.13 686.36 L688.30 686.46 L688.46 686.56 L688.62 686.66 L688.79 686.76 L688.95 686.86 L689.12 686.96 L689.28 687.06 L689.45 687.16 L689.61 687.26 L689.78 687.36 L689.94 687.46 L690.11 687.55 L690.27 687.65 L690.44 687.75 L690.60 687.85 L690.77 687.95 L690.93 688.04 L691.09 688.14 L691.26 688.24 L691.42 688.34 L691.59 688.43 L691.75 688.53 L691.92 688.63 L692.08 688.73 L692.25 688.82 L692.41 688.92 L692.58 689.02 L692.74 689.11 L692.91 689.21 L693.07 689.30 L693.23 689.40 L693.40 689.50 L693.56 689.59 L693.73 689.69 L693.89 689.78 L694.06 689.88 L694.22 689.97 L694.39 690.07 L694.55 690.16 L694.72 690.26 L694.88 690.35 L695.05 690.45 L695.21 690.54 L695.37 690.64 L695.54 690.73 M698.17 692.22 L698.34 692.32 L698.50 692.41 L698.67 692.50 L698.83 692.59 L699.00 692.68 L699.16 692.77 L699.33 692.87 L699.49 692.96 L699.65 693.05 L699.82 693.14 L699.98 693.23 L700.15 693.32 L700.31 693.41 L700.48 693.50 L700.64 693.59 L700.81 693.69 L700.97 693.78 L701.14 693.87 L701.30 693.96 L701.47 694.05 L701.63 694.14 L701.79 694.23 L701.96 694.32 L702.12 694.41 L702.29 694.50 L702.45 694.58 L702.62 694.67 L702.78 694.76 L702.95 694.85 L703.11 694.94 L703.28 695.03 L703.44 695.12 L703.61 695.21 L703.77 695.30 L703.94 695.39 L704.10 695.47 L704.26 695.56 L704.43 695.65 L704.59 695.74 L704.76 695.83 L704.92 695.91 L705.09 696.00 L705.25 696.09 L705.42 696.18 L705.58 696.26 L705.75 696.35 L705.91 696.44 L706.08 696.53 L706.24 696.61 L706.40 696.70 L706.57 696.79 L706.73 696.87 L706.90 696.96 L707.06 697.05 L707.23 697.13 L707.39 697.22 L707.56 697.31 L707.72 697.39 M710.36 698.76 L710.52 698.84 L710.68 698.92 L710.85 699.01 L711.01 699.09 L711.18 699.18 L711.34 699.26 L711.51 699.34 L711.67 699.43 L711.84 699.51 L712.00 699.60 L712.17 699.68 L712.33 699.76 L712.50 699.85 L712.66 699.93 L712.82 700.01 L712.99 700.09 L713.15 700.18 L713.32 700.26 L713.48 700.34 L713.65 700.43 L713.81 700.51 L713.98 700.59 L714.14 700.67 L714.31 700.76 L714.47 700.84 L714.64 700.92 L714.80 701.00 L714.96 701.08 L715.13 701.17 L715.29 701.25 L715.46 701.33 L715.62 701.41 L715.79 701.49 L715.95 701.57 L716.12 701.65 L716.28 701.74 L716.45 701.82 L716.61 701.90 L716.78 701.98 L716.94 702.06 L717.11 702.14 L717.27 702.22 L717.43 702.30 L717.60 702.38 L717.76 702.46 L717.93 702.54 L718.09 702.62 L718.26 702.70 L718.42 702.78 L718.59 702.86 L718.75 702.94 L718.92 703.02 L719.08 703.10 L719.25 703.18 L719.41 703.26 L719.57 703.34 L719.74 703.42 L719.90 703.50 L720.07 703.58 M722.87 704.91 L723.03 704.99 L723.20 705.07 L723.36 705.14 L723.53 705.22 L723.69 705.30 L723.85 705.37 L724.02 705.45 L724.18 705.53 L724.35 705.61 L724.51 705.68 L724.68 705.76 L724.84 705.84 L725.01 705.91 L725.17 705.99 L725.34 706.07 L725.50 706.14 L725.67 706.22 L725.83 706.30 L725.99 706.37 L726.16 706.45 L726.32 706.52 L726.49 706.60 L726.65 706.68 L726.82 706.75 L726.98 706.83 L727.15 706.90 L727.31 706.98 L727.48 707.05 L727.64 707.13 L727.81 707.20 L727.97 707.28 L728.13 707.35 L728.30 707.43 L728.46 707.50 L728.63 707.58 L728.79 707.65 L728.96 707.73 L729.12 707.80 L729.29 707.88 L729.45 707.95 L729.62 708.03 L729.78 708.10 L729.95 708.18 L730.11 708.25 L730.28 708.33 L730.44 708.40 L730.60 708.47 L730.77 708.55 L730.93 708.62 L731.10 708.69 L731.26 708.77 L731.43 708.84 L731.59 708.92 L731.76 708.99 L731.92 709.06 L732.09 709.14 L732.25 709.21 L732.42 709.28 L732.58 709.36 L732.74 709.43 M735.54 710.66 L735.71 710.73 L735.87 710.80 L736.04 710.88 L736.20 710.95 L736.37 711.02 L736.53 711.09 L736.70 711.16 L736.86 711.23 L737.02 711.30 L737.19 711.38 L737.35 711.45 L737.52 711.52 L737.68 711.59 L737.85 711.66 L738.01 711.73 L738.18 711.80 L738.34 711.87 L738.51 711.94 L738.67 712.01 L738.84 712.08 L739.00 712.15 L739.16 712.22 L739.33 712.29 L739.49 712.36 L739.66 712.43 L739.82 712.50 L739.99 712.57 L740.15 712.64 L740.32 712.71 L740.48 712.78 L740.65 712.85 L740.81 712.92 L740.98 712.99 L741.14 713.06 L741.30 713.13 L741.47 713.20 L741.63 713.27 L741.80 713.34 L741.96 713.41 L742.13 713.48 L742.29 713.55 L742.46 713.62 L742.62 713.69 L742.79 713.76 L742.95 713.82 L743.12 713.89 L743.28 713.96 L743.45 714.03 L743.61 714.10 L743.77 714.17 L743.94 714.24 L744.10 714.30 L744.27 714.37 L744.43 714.44 L744.60 714.51 L744.76 714.58 L744.93 714.65 L745.09 714.71 L745.26 714.78 L745.42 714.85 M748.22 715.99 L748.38 716.06 L748.55 716.13 L748.71 716.19 L748.88 716.26 L749.04 716.33 L749.21 716.39 L749.37 716.46 L749.54 716.53 L749.70 716.59 L749.87 716.66 L750.03 716.72 L750.19 716.79 L750.36 716.86 L750.52 716.92 L750.69 716.99 L750.85 717.05 L751.02 717.12 L751.18 717.19 L751.35 717.25 L751.51 717.32 L751.68 717.38 L751.84 717.45 L752.01 717.51 L752.17 717.58 L752.33 717.65 L752.50 717.71 L752.66 717.78 L752.83 717.84 L752.99 717.91 L753.16 717.97 L753.32 718.04 L753.49 718.10 L753.65 718.17 L753.82 718.23 L753.98 718.30 L754.15 718.36 L754.31 718.42 L754.47 718.49 L754.64 718.55 L754.80 718.62 L754.97 718.68 L755.13 718.75 L755.30 718.81 L755.46 718.88 L755.63 718.94 L755.79 719.00 L755.96 719.07 L756.12 719.13 L756.29 719.20 L756.45 719.26 L756.62 719.32 L756.78 719.39 L756.94 719.45 L757.11 719.52 L757.27 719.58 L757.44 719.64 L757.60 719.71 L757.77 719.77 L757.93 719.83 L758.10 719.90 L758.26 719.96 M761.06 721.03 L761.22 721.09 L761.39 721.15 L761.55 721.22 L761.72 721.28 L761.88 721.34 L762.05 721.40 L762.21 721.46 L762.38 721.53 L762.54 721.59 L762.71 721.65 L762.87 721.71 L763.04 721.77 L763.20 721.83 L763.36 721.90 L763.53 721.96 L763.69 722.02 L763.86 722.08 L764.02 722.14 L764.19 722.20 L764.35 722.27 L764.52 722.33 L764.68 722.39 L764.85 722.45 L765.01 722.51 L765.18 722.57 L765.34 722.63 L765.50 722.69 L765.67 722.75 L765.83 722.82 L766.00 722.88 L766.16 722.94 L766.33 723.00 L766.49 723.06 L766.66 723.12 L766.82 723.18 L766.99 723.24 L767.15 723.30 L767.32 723.36 L767.48 723.42 L767.64 723.48 L767.81 723.54 L767.97 723.60 L768.14 723.66 L768.30 723.72 L768.47 723.78 L768.63 723.84 L768.80 723.90 L768.96 723.96 L769.13 724.02 L769.29 724.08 L769.46 724.14 L769.62 724.20 L769.79 724.26 L769.95 724.32 L770.11 724.38 L770.28 724.44 L770.44 724.50 L770.61 724.56 L770.77 724.62 L770.94 724.68 L771.10 724.74 M773.90 725.74 L774.07 725.80 L774.23 725.86 L774.39 725.92 L774.56 725.97 L774.72 726.03 L774.89 726.09 L775.05 726.15 L775.22 726.21 L775.38 726.26 L775.55 726.32 L775.71 726.38 L775.88 726.44 L776.04 726.50 L776.21 726.55 L776.37 726.61 L776.53 726.67 L776.70 726.73 L776.86 726.79 L777.03 726.84 L777.19 726.90 L777.36 726.96 L777.52 727.02 L777.69 727.07 L777.85 727.13 L778.02 727.19 L778.18 727.25 L778.35 727.30 L778.51 727.36 L778.67 727.42 L778.84 727.47 L779.00 727.53 L779.17 727.59 L779.33 727.65 L779.50 727.70 L779.66 727.76 L779.83 727.82 L779.99 727.87 L780.16 727.93 L780.32 727.99 L780.49 728.04 L780.65 728.10 L780.81 728.16 L780.98 728.21 L781.14 728.27 L781.31 728.33 L781.47 728.38 L781.64 728.44 L781.80 728.50 L781.97 728.55 L782.13 728.61 L782.30 728.67 L782.46 728.72 L782.63 728.78 L782.79 728.83 L782.96 728.89 L783.12 728.95 L783.28 729.00 L783.45 729.06 L783.61 729.11 L783.78 729.17 L783.94 729.23 M786.74 730.17 L786.91 730.22 L787.07 730.28 L787.24 730.33 L787.40 730.39 L787.56 730.44 L787.73 730.50 L787.89 730.55 L788.06 730.61 L788.22 730.66 L788.39 730.72 L788.55 730.77 L788.72 730.83 L788.88 730.88 L789.05 730.94 L789.21 730.99 L789.38 731.04 L789.54 731.10 L789.70 731.15 L789.87 731.21 L790.03 731.26 L790.20 731.32 L790.36 731.37 L790.53 731.42 L790.69 731.48 L790.86 731.53 L791.02 731.59 L791.19 731.64 L791.35 731.69 L791.52 731.75 L791.68 731.80 L791.84 731.86 L792.01 731.91 L792.17 731.96 L792.34 732.02 L792.50 732.07 L792.67 732.12 L792.83 732.18 L793.00 732.23 L793.16 732.29 L793.33 732.34 L793.49 732.39 L793.66 732.45 L793.82 732.50 L793.98 732.55 L794.15 732.61 L794.31 732.66 L794.48 732.71 L794.64 732.77 L794.81 732.82 L794.97 732.87 L795.14 732.93 L795.30 732.98 L795.47 733.03 L795.63 733.08 L795.80 733.14 L795.96 733.19 L796.13 733.24 L796.29 733.30 L796.45 733.35 L796.62 733.40 L796.78 733.45 L796.95 733.51 M799.75 734.40 L799.91 734.45 L800.08 734.50 L800.24 734.55 L800.41 734.60 L800.57 734.66 L800.73 734.71 L800.90 734.76 L801.06 734.81 L801.23 734.86 L801.39 734.91 L801.56 734.97 L801.72 735.02 L801.89 735.07 L802.05 735.12 L802.22 735.17 L802.38 735.22 L802.55 735.28 L802.71 735.33 L802.87 735.38 L803.04 735.43 L803.20 735.48 L803.37 735.53 L803.53 735.58 L803.70 735.63 L803.86 735.69 L804.03 735.74 L804.19 735.79 L804.36 735.84 L804.52 735.89 L804.69 735.94 L804.85 735.99 L805.01 736.04 L805.18 736.09 L805.34 736.14 L805.51 736.19 L805.67 736.25 L805.84 736.30 L806.00 736.35 L806.17 736.40 L806.33 736.45 L806.50 736.50 L806.66 736.55 L806.83 736.60 L806.99 736.65 L807.15 736.70 L807.32 736.75 L807.48 736.80 L807.65 736.85 L807.81 736.90 L807.98 736.95 L808.14 737.00 L808.31 737.05 L808.47 737.10 L808.64 737.15 L808.80 737.20 L808.97 737.25 L809.13 737.30 L809.30 737.35 L809.46 737.40 L809.62 737.45 L809.79 737.50 L809.95 737.55 M812.75 738.39 L812.92 738.44 L813.08 738.49 L813.25 738.54 L813.41 738.59 L813.58 738.64 L813.74 738.69 L813.90 738.74 L814.07 738.79 L814.23 738.84 L814.40 738.89 L814.56 738.93 L814.73 738.98 L814.89 739.03 L815.06 739.08 L815.22 739.13 L815.39 739.18 L815.55 739.23 L815.72 739.28 L815.88 739.32 L816.04 739.37 L816.21 739.42 L816.37 739.47 L816.54 739.52 L816.70 739.57 L816.87 739.62 L817.03 739.66 L817.20 739.71 L817.36 739.76 L817.53 739.81 L817.69 739.86 L817.86 739.91 L818.02 739.95 L818.18 740.00 L818.35 740.05 L818.51 740.10 L818.68 740.15 L818.84 740.19 L819.01 740.24 L819.17 740.29 L819.34 740.34 L819.50 740.39 L819.67 740.43 L819.83 740.48 L820.00 740.53 L820.16 740.58 L820.32 740.63 L820.49 740.67 L820.65 740.72 L820.82 740.77 L820.98 740.82 L821.15 740.86 L821.31 740.91 L821.48 740.96 L821.64 741.01 L821.81 741.05 L821.97 741.10 L822.14 741.15 L822.30 741.20 L822.47 741.24 L822.63 741.29 L822.79 741.34 L822.96 741.39 M825.76 742.19 L825.92 742.23 L826.09 742.28 L826.25 742.33 L826.42 742.37 L826.58 742.42 L826.75 742.47 L826.91 742.51 L827.07 742.56 L827.24 742.61 L827.40 742.65 L827.57 742.70 L827.73 742.75 L827.90 742.79 L828.06 742.84 L828.23 742.88 L828.39 742.93 L828.56 742.98 L828.72 743.02 L828.89 743.07 L829.05 743.12 L829.21 743.16 L829.38 743.21 L829.54 743.25 L829.71 743.30 L829.87 743.35 L830.04 743.39 L830.20 743.44 L830.37 743.48 L830.53 743.53 L830.70 743.58 L830.86 743.62 L831.03 743.67 L831.19 743.71 L831.35 743.76 L831.52 743.81 L831.68 743.85 L831.85 743.90 L832.01 743.94 L832.18 743.99 L832.34 744.03 L832.51 744.08 L832.67 744.13 L832.84 744.17 L833.00 744.22 L833.17 744.26 L833.33 744.31 L833.49 744.35 L833.66 744.40 L833.82 744.44 L833.99 744.49 L834.15 744.53 L834.32 744.58 L834.48 744.62 L834.65 744.67 L834.81 744.72 L834.98 744.76 L835.14 744.81 L835.31 744.85 L835.47 744.90 L835.64 744.94 L835.80 744.99 L835.96 745.03 M838.93 745.84 L839.09 745.88 L839.26 745.93 L839.42 745.97 L839.59 746.01 L839.75 746.06 L839.92 746.10 L840.08 746.15 L840.24 746.19 L840.41 746.24 L840.57 746.28 L840.74 746.32 L840.90 746.37 L841.07 746.41 L841.23 746.46 L841.40 746.50 L841.56 746.55 L841.73 746.59 L841.89 746.63 L842.06 746.68 L842.22 746.72 L842.38 746.77 L842.55 746.81 L842.71 746.85 L842.88 746.90 L843.04 746.94 L843.21 746.98 L843.37 747.03 L843.54 747.07 L843.70 747.12 L843.87 747.16 L844.03 747.20 L844.20 747.25 L844.36 747.29 L844.52 747.33 L844.69 747.38 L844.85 747.42 L845.02 747.47 L845.18 747.51 L845.35 747.55 L845.51 747.60 L845.68 747.64 L845.84 747.68 L846.01 747.73 L846.17 747.77 L846.34 747.81 L846.50 747.86 L846.66 747.90 L846.83 747.94 L846.99 747.99 L847.16 748.03 L847.32 748.07 L847.49 748.12 L847.65 748.16 L847.82 748.20 L847.98 748.25 L848.15 748.29 L848.31 748.33 L848.48 748.37 L848.64 748.42 L848.81 748.46 L848.97 748.50 L849.13 748.55 M852.10 749.31 L852.26 749.36 L852.43 749.40 L852.59 749.44 L852.76 749.48 L852.92 749.53 L853.09 749.57 L853.25 749.61 L853.41 749.65 L853.58 749.70 L853.74 749.74 L853.91 749.78 L854.07 749.82 L854.24 749.86 L854.40 749.91 L854.57 749.95 L854.73 749.99 L854.90 750.03 L855.06 750.07 L855.23 750.12 L855.39 750.16 L855.55 750.20 L855.72 750.24 L855.88 750.28 L856.05 750.33 L856.21 750.37 L856.38 750.41 L856.54 750.45 L856.71 750.49 L856.87 750.54 L857.04 750.58 L857.20 750.62 L857.37 750.66 L857.53 750.70 L857.69 750.74 L857.86 750.79 L858.02 750.83 L858.19 750.87 L858.35 750.91 L858.52 750.95 L858.68 750.99 L858.85 751.03 L859.01 751.08 L859.18 751.12 L859.34 751.16 L859.51 751.20 L859.67 751.24 L859.83 751.28 L860.00 751.32 L860.16 751.37 L860.33 751.41 L860.49 751.45 L860.66 751.49 L860.82 751.53 L860.99 751.57 L861.15 751.61 L861.32 751.65 L861.48 751.70 L861.65 751.74 L861.81 751.78 L861.98 751.82 L862.14 751.86 L862.30 751.90 M865.27 752.63 L865.43 752.68 L865.60 752.72 L865.76 752.76 L865.93 752.80 L866.09 752.84 L866.26 752.88 L866.42 752.92 L866.58 752.96 L866.75 753.00 L866.91 753.04 L867.08 753.08 L867.24 753.12 L867.41 753.16 L867.57 753.20 L867.74 753.24 L867.90 753.28 L868.07 753.32 L868.23 753.36 L868.40 753.40 L868.56 753.44 L868.72 753.48 L868.89 753.52 L869.05 753.56 L869.22 753.60 L869.38 753.64 L869.55 753.68 L869.71 753.72 L869.88 753.76 L870.04 753.80 L870.21 753.84 L870.37 753.88 L870.54 753.92 L870.70 753.96 L870.86 754.00 L871.03 754.04 L871.19 754.08 L871.36 754.12 L871.52 754.16 L871.69 754.20 L871.85 754.24 L872.02 754.28 L872.18 754.32 L872.35 754.36 L872.51 754.40 L872.68 754.44 L872.84 754.48 L873.00 754.52 L873.17 754.56 L873.33 754.60 L873.50 754.64 L873.66 754.68 L873.83 754.72 L873.99 754.75 L874.16 754.79 L874.32 754.83 L874.49 754.87 L874.65 754.91 L874.82 754.95 L874.98 754.99 L875.15 755.03 L875.31 755.07 L875.47 755.11 M878.44 755.81 L878.60 755.85 L878.77 755.89 L878.93 755.93 L879.10 755.97 L879.26 756.01 L879.43 756.04 L879.59 756.08 L879.75 756.12 L879.92 756.16 L880.08 756.20 L880.25 756.24 L880.41 756.28 L880.58 756.32 L880.74 756.35 L880.91 756.39 L881.07 756.43 L881.24 756.47 L881.40 756.51 L881.57 756.55 L881.73 756.58 L881.89 756.62 L882.06 756.66 L882.22 756.70 L882.39 756.74 L882.55 756.78 L882.72 756.82 L882.88 756.85 L883.05 756.89 L883.21 756.93 L883.38 756.97 L883.54 757.01 L883.71 757.04 L883.87 757.08 L884.03 757.12 L884.20 757.16 L884.36 757.20 L884.53 757.24 L884.69 757.27 L884.86 757.31 L885.02 757.35 L885.19 757.39 L885.35 757.43 L885.52 757.46 L885.68 757.50 L885.85 757.54 L886.01 757.58 L886.17 757.62 L886.34 757.65 L886.50 757.69 L886.67 757.73 L886.83 757.77 L887.00 757.81 L887.16 757.84 L887.33 757.88 L887.49 757.92 L887.66 757.96 L887.82 757.99 L887.99 758.03 L888.15 758.07 L888.32 758.11 L888.48 758.14 L888.64 758.18 L888.81 758.22 M891.77 758.89 L891.94 758.93 L892.10 758.97 L892.27 759.01 L892.43 759.04 L892.60 759.08 L892.76 759.12 L892.92 759.15 L893.09 759.19 L893.25 759.23 L893.42 759.27 L893.58 759.30 L893.75 759.34 L893.91 759.38 L894.08 759.41 L894.24 759.45 L894.41 759.49 L894.57 759.53 L894.74 759.56 L894.90 759.60 L895.06 759.64 L895.23 759.67 L895.39 759.71 L895.56 759.75 L895.72 759.78 L895.89 759.82 L896.05 759.86 L896.22 759.89 L896.38 759.93 L896.55 759.97 L896.71 760.00 L896.88 760.04 L897.04 760.08 L897.20 760.11 L897.37 760.15 L897.53 760.19 L897.70 760.22 L897.86 760.26 L898.03 760.30 L898.19 760.33 L898.36 760.37 L898.52 760.41 L898.69 760.44 L898.85 760.48 L899.02 760.52 L899.18 760.55 L899.34 760.59 L899.51 760.63 L899.67 760.66 L899.84 760.70 L900.00 760.73 L900.17 760.77 L900.33 760.81 L900.50 760.84 L900.66 760.88 L900.83 760.92 L900.99 760.95 L901.16 760.99 L901.32 761.02 L901.49 761.06 L901.65 761.10 L901.81 761.13 L901.98 761.17 L902.14 761.21 M905.11 761.85 L905.27 761.89 L905.44 761.92 L905.60 761.96 L905.77 762.00 L905.93 762.03 L906.09 762.07 L906.26 762.10 L906.42 762.14 L906.59 762.17 L906.75 762.21 L906.92 762.25 L907.08 762.28 L907.25 762.32 L907.41 762.35 L907.58 762.39 L907.74 762.42 L907.91 762.46 L908.07 762.49 L908.23 762.53 L908.40 762.57 L908.56 762.60 L908.73 762.64 L908.89 762.67 L909.06 762.71 L909.22 762.74 L909.39 762.78 L909.55 762.81 L909.72 762.85 L909.88 762.88 L910.05 762.92 L910.21 762.95 L910.37 762.99 L910.54 763.02 L910.70 763.06 L910.87 763.10 L911.03 763.13 L911.20 763.17 L911.36 763.20 L911.53 763.24 L911.69 763.27 L911.86 763.31 L912.02 763.34 L912.19 763.38 L912.35 763.41 L912.51 763.45 L912.68 763.48 L912.84 763.52 L913.01 763.55 L913.17 763.59 L913.34 763.62 L913.50 763.66 L913.67 763.69 L913.83 763.73 L914.00 763.76 L914.16 763.80 L914.33 763.83 L914.49 763.87 L914.66 763.90 L914.82 763.94 L914.98 763.97 L915.15 764.00 L915.31 764.04 L915.48 764.07 M918.44 764.70 L918.61 764.73 L918.77 764.77 L918.94 764.80 L919.10 764.83 L919.26 764.87 L919.43 764.90 L919.59 764.94 L919.76 764.97 L919.92 765.01 L920.09 765.04 L920.25 765.07 L920.42 765.11 L920.58 765.14 L920.75 765.18 L920.91 765.21 L921.08 765.25 L921.24 765.28 L921.40 765.31 L921.57 765.35 L921.73 765.38 L921.90 765.42 L922.06 765.45 L922.23 765.48 L922.39 765.52 L922.56 765.55 L922.72 765.59 L922.89 765.62 L923.05 765.65 L923.22 765.69 L923.38 765.72 L923.54 765.76 L923.71 765.79 L923.87 765.82 L924.04 765.86 L924.20 765.89 L924.37 765.93 L924.53 765.96 L924.70 765.99 L924.86 766.03 L925.03 766.06 L925.19 766.10 L925.36 766.13 L925.52 766.16 L925.68 766.20 L925.85 766.23 L926.01 766.26 L926.18 766.30 L926.34 766.33 L926.51 766.37 L926.67 766.40 L926.84 766.43 L927.00 766.47 L927.17 766.50 L927.33 766.53 L927.50 766.57 L927.66 766.60 L927.83 766.63 L927.99 766.67 L928.15 766.70 L928.32 766.73 L928.48 766.77 L928.65 766.80 L928.81 766.83 M931.78 767.43 L931.94 767.47 L932.11 767.50 L932.27 767.53 L932.43 767.57 L932.60 767.60 L932.76 767.63 L932.93 767.67 L933.09 767.70 L933.26 767.73 L933.42 767.77 L933.59 767.80 L933.75 767.83 L933.92 767.86 L934.08 767.90 L934.25 767.93 L934.41 767.96 L934.57 768.00 L934.74 768.03 L934.90 768.06 L935.07 768.10 L935.23 768.13 L935.40 768.16 L935.56 768.19 L935.73 768.23 L935.89 768.26 L936.06 768.29 L936.22 768.33 L936.39 768.36 L936.55 768.39 L936.71 768.42 L936.88 768.46 L937.04 768.49 L937.21 768.52 L937.37 768.55 L937.54 768.59 L937.70 768.62 L937.87 768.65 L938.03 768.68 L938.20 768.72 L938.36 768.75 L938.53 768.78 L938.69 768.82 L938.85 768.85 L939.02 768.88 L939.18 768.91 L939.35 768.95 L939.51 768.98 L939.68 769.01 L939.84 769.04 L940.01 769.08 L940.17 769.11 L940.34 769.14 L940.50 769.17 L940.67 769.20 L940.83 769.24 L941.00 769.27 L941.16 769.30 L941.32 769.33 L941.49 769.37 L941.65 769.40 L941.82 769.43 L941.98 769.46 L942.15 769.50 M945.11 770.07 L945.28 770.11 L945.44 770.14 L945.60 770.17 L945.77 770.20 L945.93 770.23 L946.10 770.27 L946.26 770.30 L946.43 770.33 L946.59 770.36 L946.76 770.39 L946.92 770.43 L947.09 770.46 L947.25 770.49 L947.42 770.52 L947.58 770.55 L947.74 770.58 L947.91 770.62 L948.07 770.65 L948.24 770.68 L948.40 770.71 L948.57 770.74 L948.73 770.78 L948.90 770.81 L949.06 770.84 L949.23 770.87 L949.39 770.90 L949.56 770.93 L949.72 770.97 L949.88 771.00 L950.05 771.03 L950.21 771.06 L950.38 771.09 L950.54 771.12 L950.71 771.15 L950.87 771.19 L951.04 771.22 L951.20 771.25 L951.37 771.28 L951.53 771.31 L951.70 771.34 L951.86 771.38 L952.02 771.41 L952.19 771.44 L952.35 771.47 L952.52 771.50 L952.68 771.53 L952.85 771.56 L953.01 771.60 L953.18 771.63 L953.34 771.66 L953.51 771.69 L953.67 771.72 L953.84 771.75 L954.00 771.78 L954.17 771.81 L954.33 771.85 L954.49 771.88 L954.66 771.91 L954.82 771.94 L954.99 771.97 L955.15 772.00 L955.32 772.03 L955.48 772.06 M958.45 772.62 L958.61 772.65 L958.77 772.68 L958.94 772.72 L959.10 772.75 L959.27 772.78 L959.43 772.81 L959.60 772.84 L959.76 772.87 L959.93 772.90 L960.09 772.93 L960.26 772.96 L960.42 772.99 L960.59 773.02 L960.75 773.05 L960.91 773.08 L961.08 773.12 L961.24 773.15 L961.41 773.18 L961.57 773.21 L961.74 773.24 L961.90 773.27 L962.07 773.30 L962.23 773.33 L962.40 773.36 L962.56 773.39 L962.73 773.42 L962.89 773.45 L963.05 773.48 L963.22 773.51 L963.38 773.54 L963.55 773.57 L963.71 773.61 L963.88 773.64 L964.04 773.67 L964.21 773.70 L964.37 773.73 L964.54 773.76 L964.70 773.79 L964.87 773.82 L965.03 773.85 L965.19 773.88 L965.36 773.91 L965.52 773.94 L965.69 773.97 L965.85 774.00 L966.02 774.03 L966.18 774.06 L966.35 774.09 L966.51 774.12 L966.68 774.15 L966.84 774.18 L967.01 774.21 L967.17 774.24 L967.34 774.27 L967.50 774.30 L967.66 774.33 L967.83 774.36 L967.99 774.39 L968.16 774.42 L968.32 774.45 L968.49 774.48 L968.65 774.51 L968.82 774.55 M971.78 775.09 L971.94 775.12 L972.11 775.15 L972.27 775.17 L972.44 775.20 L972.60 775.23 L972.77 775.26 L972.93 775.29 L973.10 775.32 L973.26 775.35 L973.43 775.38 L973.59 775.41 L973.76 775.44 L973.92 775.47 L974.08 775.50 L974.25 775.53 L974.41 775.56 L974.58 775.59 L974.74 775.62 L974.91 775.65 L975.07 775.68 L975.24 775.71 L975.40 775.74 L975.57 775.77 L975.73 775.80 L975.90 775.83 L976.06 775.86 L976.22 775.89 L976.39 775.92 L976.55 775.95 L976.72 775.98 L976.88 776.01 L977.05 776.04 L977.21 776.07 L977.38 776.09 L977.54 776.12 L977.71 776.15 L977.87 776.18 L978.04 776.21 L978.20 776.24 L978.36 776.27 L978.53 776.30 L978.69 776.33 L978.86 776.36 L979.02 776.39 L979.19 776.42 L979.35 776.45 L979.52 776.48 L979.68 776.51 L979.85 776.54 L980.01 776.57 L980.18 776.59 L980.34 776.62 L980.51 776.65 L980.67 776.68 L980.83 776.71 L981.00 776.74 L981.16 776.77 L981.33 776.80 L981.49 776.83 L981.66 776.86 L981.82 776.89 L981.99 776.92 L982.15 776.95 M985.11 777.47 L985.28 777.50 L985.44 777.53 L985.61 777.56 L985.77 777.58 L985.94 777.61 L986.10 777.64 L986.27 777.67 L986.43 777.70 L986.60 777.73 L986.76 777.76 L986.93 777.79 L987.09 777.81 L987.25 777.84 L987.42 777.87 L987.58 777.90 L987.75 777.93 L987.91 777.96 L988.08 777.99 L988.24 778.02 L988.41 778.04 L988.57 778.07 L988.74 778.10 L988.90 778.13 L989.07 778.16 L989.23 778.19 L989.39 778.22 L989.56 778.25 L989.72 778.27 L989.89 778.30 L990.05 778.33 L990.22 778.36 L990.38 778.39 L990.55 778.42 L990.71 778.45 L990.88 778.47 L991.04 778.50 L991.21 778.53 L991.37 778.56 L991.53 778.59 L991.70 778.62 L991.86 778.65 L992.03 778.67 L992.19 778.70 L992.36 778.73 L992.52 778.76 L992.69 778.79 L992.85 778.82 L993.02 778.84 L993.18 778.87 L993.35 778.90 L993.51 778.93 L993.68 778.96 L993.84 778.99 L994.00 779.01 L994.17 779.04 L994.33 779.07 L994.50 779.10 L994.66 779.13 L994.83 779.16 L994.99 779.18 L995.16 779.21 L995.32 779.24 L995.49 779.27 M998.45 779.78 L998.61 779.80 L998.78 779.83 L998.94 779.86 L999.11 779.89 L999.27 779.92 L999.44 779.94 L999.60 779.97 L999.77 780.00 L999.93 780.03 L1000.10 780.06 L1000.26 780.08 L1000.42 780.11 L1000.59 780.14 L1000.75 780.17 L1000.92 780.20 L1001.08 780.22 L1001.25 780.25 L1001.41 780.28 L1001.58 780.31 L1001.74 780.34 L1001.91 780.36 L1002.07 780.39 L1002.24 780.42 L1002.40 780.45 L1002.56 780.47 L1002.73 780.50 L1002.89 780.53 L1003.06 780.56 L1003.22 780.59 L1003.39 780.61 L1003.55 780.64 L1003.72 780.67 L1003.88 780.70 L1004.05 780.72 L1004.21 780.75 L1004.38 780.78 L1004.54 780.81 L1004.70 780.83 L1004.87 780.86 L1005.03 780.89 L1005.20 780.92 L1005.36 780.95 L1005.53 780.97 L1005.69 781.00 L1005.86 781.03 L1006.02 781.06 L1006.19 781.08 L1006.35 781.11 L1006.52 781.14 L1006.68 781.17 L1006.85 781.19 L1007.01 781.22 L1007.17 781.25 L1007.34 781.28 L1007.50 781.30 L1007.67 781.33 L1007.83 781.36 L1008.00 781.39 L1008.16 781.41 L1008.33 781.44 L1008.49 781.47 L1008.66 781.50 L1008.82 781.52 M1011.78 782.01 L1011.95 782.04 L1012.11 782.07 L1012.28 782.10 L1012.44 782.12 L1012.61 782.15 L1012.77 782.18 L1012.94 782.20 L1013.10 782.23 L1013.27 782.26 L1013.43 782.29 L1013.59 782.31 L1013.76 782.34 L1013.92 782.37 L1014.09 782.39 L1014.25 782.42 L1014.42 782.45 L1014.58 782.48 L1014.75 782.50 L1014.91 782.53 L1015.08 782.56 L1015.24 782.58 L1015.41 782.61 L1015.57 782.64 L1015.73 782.66 L1015.90 782.69 L1016.06 782.72 L1016.23 782.75 L1016.39 782.77 L1016.56 782.80 L1016.72 782.83 L1016.89 782.85 L1017.05 782.88 L1017.22 782.91 L1017.38 782.93 L1017.55 782.96 L1017.71 782.99 L1017.87 783.01 L1018.04 783.04 L1018.20 783.07 L1018.37 783.09 L1018.53 783.12 L1018.70 783.15 L1018.86 783.18 L1019.03 783.20 L1019.19 783.23 L1019.36 783.26 L1019.52 783.28 L1019.69 783.31 L1019.85 783.34 L1020.02 783.36 L1020.18 783.39 L1020.34 783.42 L1020.51 783.44 L1020.67 783.47 L1020.84 783.50 L1021.00 783.52 L1021.17 783.55 L1021.33 783.58 L1021.50 783.60 L1021.66 783.63 L1021.83 783.66 L1021.99 783.68 L1022.16 783.71 M1025.12 784.19 L1025.28 784.21 L1025.45 784.24 L1025.61 784.27 L1025.78 784.29 L1025.94 784.32 L1026.11 784.34 L1026.27 784.37 L1026.44 784.40 L1026.60 784.42 L1026.76 784.45 L1026.93 784.48 L1027.09 784.50 L1027.26 784.53 L1027.42 784.55 L1027.59 784.58 L1027.75 784.61 L1027.92 784.63 L1028.08 784.66 L1028.25 784.69 L1028.41 784.71 L1028.58 784.74 L1028.74 784.76 L1028.90 784.79 L1029.07 784.82 L1029.23 784.84 L1029.40 784.87 L1029.56 784.90 L1029.73 784.92 L1029.89 784.95 L1030.06 784.97 L1030.22 785.00 L1030.39 785.03 L1030.55 785.05 L1030.72 785.08 L1030.88 785.10 L1031.04 785.13 L1031.21 785.16 L1031.37 785.18 L1031.54 785.21 L1031.70 785.24 L1031.87 785.26 L1032.03 785.29 L1032.20 785.31 L1032.36 785.34 L1032.53 785.37 L1032.69 785.39 L1032.86 785.42 L1033.02 785.44 L1033.19 785.47 L1033.35 785.50 L1033.51 785.52 L1033.68 785.55 L1033.84 785.57 L1034.01 785.60 L1034.17 785.62 L1034.34 785.65 L1034.50 785.68 L1034.67 785.70 L1034.83 785.73 L1035.00 785.75 L1035.16 785.78 L1035.33 785.81 L1035.49 785.83 M1038.45 786.30 L1038.62 786.32 L1038.78 786.35 L1038.95 786.37 L1039.11 786.40 L1039.28 786.42 L1039.44 786.45 L1039.61 786.47 L1039.77 786.50 L1039.93 786.53 L1040.10 786.55 L1040.26 786.58 L1040.43 786.60 L1040.59 786.63 L1040.76 786.65 L1040.92 786.68 L1041.09 786.70 L1041.25 786.73 L1041.42 786.76 L1041.58 786.78 L1041.75 786.81 L1041.91 786.83 L1042.07 786.86 L1042.24 786.88 L1042.40 786.91 L1042.57 786.93 L1042.73 786.96 L1042.90 786.99 L1043.06 787.01 L1043.23 787.04 L1043.39 787.06 L1043.56 787.09 L1043.72 787.11 L1043.89 787.14 L1044.05 787.16 L1044.21 787.19 L1044.38 787.21 L1044.54 787.24 L1044.71 787.26 L1044.87 787.29 L1045.04 787.31 L1045.20 787.34 L1045.37 787.37 L1045.53 787.39 L1045.70 787.42 L1045.86 787.44 L1046.03 787.47 L1046.19 787.49 L1046.36 787.52 L1046.52 787.54 L1046.68 787.57 L1046.85 787.59 L1047.01 787.62 L1047.18 787.64 L1047.34 787.67 L1047.51 787.69 L1047.67 787.72 L1047.84 787.74 L1048.00 787.77 L1048.17 787.79 L1048.33 787.82 L1048.50 787.84 L1048.66 787.87 L1048.82 787.89 M1051.79 788.35 L1051.95 788.37 L1052.12 788.40 L1052.28 788.42 L1052.45 788.45 L1052.61 788.47 L1052.78 788.50 L1052.94 788.52 L1053.10 788.55 L1053.27 788.57 L1053.43 788.59 L1053.60 788.62 L1053.76 788.64 L1053.93 788.67 L1054.09 788.69 L1054.26 788.72 L1054.42 788.74 L1054.59 788.77 L1054.75 788.79 L1054.92 788.82 L1055.08 788.84 L1055.24 788.87 L1055.41 788.89 L1055.57 788.92 L1055.74 788.94 L1055.90 788.97 L1056.07 788.99 L1056.23 789.02 L1056.40 789.04 L1056.56 789.07 L1056.73 789.09 L1056.89 789.12 L1057.06 789.14 L1057.22 789.17 L1057.38 789.19 L1057.55 789.21 L1057.71 789.24 L1057.88 789.26 L1058.04 789.29 L1058.21 789.31 L1058.37 789.34 L1058.54 789.36 L1058.70 789.39 L1058.87 789.41 L1059.03 789.44 L1059.20 789.46 L1059.36 789.49 L1059.53 789.51 L1059.69 789.53 L1059.85 789.56 L1060.02 789.58 L1060.18 789.61 L1060.35 789.63 L1060.51 789.66 L1060.68 789.68 L1060.84 789.71 L1061.01 789.73 L1061.17 789.76 L1061.34 789.78 L1061.50 789.80 L1061.67 789.83 L1061.83 789.85 L1061.99 789.88 L1062.16 789.90 M1065.12 790.34 L1065.29 790.36 L1065.45 790.39 L1065.62 790.41 L1065.78 790.44 L1065.95 790.46 L1066.11 790.49 L1066.27 790.51 L1066.44 790.53 L1066.60 790.56 L1066.77 790.58 L1066.93 790.61 L1067.10 790.63 L1067.26 790.66 L1067.43 790.68 L1067.59 790.70 L1067.76 790.73 L1067.92 790.75 L1068.09 790.78 L1068.25 790.80 L1068.41 790.82 L1068.58 790.85 L1068.74 790.87 L1068.91 790.90 L1069.07 790.92 L1069.24 790.95 L1069.40 790.97 L1069.57 790.99 L1069.73 791.02 L1069.90 791.04 L1070.06 791.07 L1070.23 791.09 L1070.39 791.11 L1070.55 791.14 L1070.72 791.16 L1070.88 791.19 L1071.05 791.21 L1071.21 791.23 L1071.38 791.26 L1071.54 791.28 L1071.71 791.31 L1071.87 791.33 L1072.04 791.35 L1072.20 791.38 L1072.37 791.40 L1072.53 791.43 L1072.70 791.45 L1072.86 791.47 L1073.02 791.50 L1073.19 791.52 L1073.35 791.55 L1073.52 791.57 L1073.68 791.59 L1073.85 791.62 L1074.01 791.64 L1074.18 791.66 L1074.34 791.69 L1074.51 791.71 L1074.67 791.74 L1074.84 791.76 L1075.00 791.78 L1075.16 791.81 L1075.33 791.83 L1075.49 791.86 M1078.46 792.28 L1078.62 792.31 L1078.79 792.33 L1078.95 792.35 L1079.12 792.38 L1079.28 792.40 L1079.44 792.42 L1079.61 792.45 L1079.77 792.47 L1079.94 792.50 L1080.10 792.52 L1080.27 792.54 L1080.43 792.57 L1080.60 792.59 L1080.76 792.61 L1080.93 792.64 L1081.09 792.66 L1081.26 792.68 L1081.42 792.71 L1081.58 792.73 L1081.75 792.75 L1081.91 792.78 L1082.08 792.80 L1082.24 792.83 L1082.41 792.85 L1082.57 792.87 L1082.74 792.90 L1082.90 792.92 L1083.07 792.94 L1083.23 792.97 L1083.40 792.99 L1083.56 793.01 L1083.72 793.04 L1083.89 793.06 L1084.05 793.08 L1084.22 793.11 L1084.38 793.13 L1084.55 793.15 L1084.71 793.18 L1084.88 793.20 L1085.04 793.22 L1085.21 793.25 L1085.37 793.27 L1085.54 793.29 L1085.70 793.32 L1085.87 793.34 L1086.03 793.36 L1086.19 793.39 L1086.36 793.41 L1086.52 793.43 L1086.69 793.46 L1086.85 793.48 L1087.02 793.50 L1087.18 793.53 L1087.35 793.55 L1087.51 793.57 L1087.68 793.60 L1087.84 793.62 L1088.01 793.64 L1088.17 793.67 L1088.33 793.69 L1088.50 793.71 L1088.66 793.74 L1088.83 793.76 M1091.79 794.17 L1091.96 794.20 L1092.12 794.22 L1092.29 794.24 L1092.45 794.27 L1092.61 794.29 L1092.78 794.31 L1092.94 794.34 L1093.11 794.36 L1093.27 794.38 L1093.44 794.41 L1093.60 794.43 L1093.77 794.45 L1093.93 794.47 L1094.10 794.50 L1094.26 794.52 L1094.43 794.54 L1094.59 794.57 L1094.75 794.59 L1094.92 794.61 L1095.08 794.63 L1095.25 794.66 L1095.41 794.68 L1095.58 794.70 L1095.74 794.73 L1095.91 794.75 L1096.07 794.77 L1096.24 794.79 L1096.40 794.82 L1096.57 794.84 L1096.73 794.86 L1096.89 794.89 L1097.06 794.91 L1097.22 794.93 L1097.39 794.95 L1097.55 794.98 L1097.72 795.00 L1097.88 795.02 L1098.05 795.05 L1098.21 795.07 L1098.38 795.09 L1098.54 795.11 L1098.71 795.14 L1098.87 795.16 L1099.04 795.18 L1099.20 795.21 L1099.36 795.23 L1099.53 795.25 L1099.69 795.27 L1099.86 795.30 L1100.02 795.32 L1100.19 795.34 L1100.35 795.36 L1100.52 795.39 L1100.68 795.41 L1100.85 795.43 L1101.01 795.46 L1101.18 795.48 L1101.34 795.50 L1101.50 795.52 L1101.67 795.55 L1101.83 795.57 L1102.00 795.59 L1102.16 795.61 M1105.13 796.02 L1105.29 796.04 L1105.46 796.06 L1105.62 796.09 L1105.78 796.11 L1105.95 796.13 L1106.11 796.15 L1106.28 796.18 L1106.44 796.20 L1106.61 796.22 L1106.77 796.24 L1106.94 796.27 L1107.10 796.29 L1107.27 796.31 L1107.43 796.33 L1107.60 796.36 L1107.76 796.38 L1107.92 796.40 L1108.09 796.42 L1108.25 796.45 L1108.42 796.47 L1108.58 796.49 L1108.75 796.51 L1108.91 796.54 L1109.08 796.56 L1109.24 796.58 L1109.41 796.60 L1109.57 796.62 L1109.74 796.65 L1109.90 796.67 L1110.06 796.69 L1110.23 796.71 L1110.39 796.74 L1110.56 796.76 L1110.72 796.78 L1110.89 796.80 L1111.05 796.82 L1111.22 796.85 L1111.38 796.87 L1111.55 796.89 L1111.71 796.91 L1111.88 796.94 L1112.04 796.96 L1112.21 796.98 L1112.37 797.00 L1112.53 797.02 L1112.70 797.05 L1112.86 797.07 L1113.03 797.09 L1113.19 797.11 L1113.36 797.14 L1113.52 797.16 L1113.69 797.18 L1113.85 797.20 L1114.02 797.22 L1114.18 797.25 L1114.35 797.27 L1114.51 797.29 L1114.67 797.31 L1114.84 797.33 L1115.00 797.36 L1115.17 797.38 L1115.33 797.40 L1115.50 797.42 M1118.46 797.82 L1118.63 797.84 L1118.79 797.86 L1118.95 797.88 L1119.12 797.91 L1119.28 797.93 L1119.45 797.95 L1119.61 797.97 L1119.78 797.99 L1119.94 798.02 L1120.11 798.04 L1120.27 798.06 L1120.44 798.08 L1120.60 798.10 L1120.77 798.13 L1120.93 798.15 L1121.09 798.17 L1121.26 798.19 L1121.42 798.21 L1121.59 798.23 L1121.75 798.26 L1121.92 798.28 L1122.08 798.30 L1122.25 798.32 L1122.41 798.34 L1122.58 798.37 L1122.74 798.39 L1122.91 798.41 L1123.07 798.43 L1123.23 798.45 L1123.40 798.47 L1123.56 798.50 L1123.73 798.52 L1123.89 798.54 L1124.06 798.56 L1124.22 798.58 L1124.39 798.60 L1124.55 798.63 L1124.72 798.65 L1124.88 798.67 L1125.05 798.69 L1125.21 798.71 L1125.38 798.74 L1125.54 798.76 L1125.70 798.78 L1125.87 798.80 L1126.03 798.82 L1126.20 798.84 L1126.36 798.87 L1126.53 798.89 L1126.69 798.91 L1126.86 798.93 L1127.02 798.95 L1127.19 798.97 L1127.35 798.99 L1127.52 799.02 L1127.68 799.04 L1127.84 799.06 L1128.01 799.08 L1128.17 799.10 L1128.34 799.12 L1128.50 799.15 L1128.67 799.17 L1128.83 799.19 M1131.80 799.58 L1131.96 799.60 L1132.12 799.62 L1132.29 799.64 L1132.45 799.66 L1132.62 799.68 L1132.78 799.70 L1132.95 799.73 L1133.11 799.75 L1133.28 799.77 L1133.44 799.79 L1133.61 799.81 L1133.77 799.83 L1133.94 799.85 L1134.10 799.87 L1134.26 799.90 L1134.43 799.92 L1134.59 799.94 L1134.76 799.96 L1134.92 799.98 L1135.09 800.00 L1135.25 800.02 L1135.42 800.05 L1135.58 800.07 L1135.75 800.09 L1135.91 800.11 L1136.08 800.13 L1136.24 800.15 L1136.40 800.17 L1136.57 800.19 L1136.73 800.22 L1136.90 800.24 L1137.06 800.26 L1137.23 800.28 L1137.39 800.30 L1137.56 800.32 L1137.72 800.34 L1137.89 800.36 L1138.05 800.39 L1138.22 800.41 L1138.38 800.43 L1138.55 800.45 L1138.71 800.47 L1138.87 800.49 L1139.04 800.51 L1139.20 800.53 L1139.37 800.55 L1139.53 800.58 L1139.70 800.60 L1139.86 800.62 L1140.03 800.64 L1140.19 800.66 L1140.36 800.68 L1140.52 800.70 L1140.69 800.72 L1140.85 800.74 L1141.01 800.77 L1141.18 800.79 L1141.34 800.81 L1141.51 800.83 L1141.67 800.85 L1141.84 800.87 L1142.00 800.89 L1142.17 800.91 M1145.13 801.29 L1145.29 801.31 L1145.46 801.33 L1145.62 801.35 L1145.79 801.37 L1145.95 801.40 L1146.12 801.42 L1146.28 801.44 L1146.45 801.46 L1146.61 801.48 L1146.78 801.50 L1146.94 801.52 L1147.11 801.54 L1147.27 801.56 L1147.43 801.58 L1147.60 801.60 L1147.76 801.63 L1147.93 801.65 L1148.09 801.67 L1148.26 801.69 L1148.42 801.71 L1148.59 801.73 L1148.75 801.75 L1148.92 801.77 L1149.08 801.79 L1149.25 801.81 L1149.41 801.83 L1149.57 801.85 L1149.74 801.87 L1149.90 801.90 L1150.07 801.92 L1150.23 801.94 L1150.40 801.96 L1150.56 801.98 L1150.73 802.00 L1150.89 802.02 L1151.06 802.04 L1151.22 802.06 L1151.39 802.08 L1151.55 802.10 L1151.72 802.12 L1151.88 802.14 L1152.04 802.17 L1152.21 802.19 L1152.37 802.21 L1152.54 802.23 L1152.70 802.25 L1152.87 802.27 L1153.03 802.29 L1153.20 802.31 L1153.36 802.33 L1153.53 802.35 L1153.69 802.37 L1153.86 802.39 L1154.02 802.41 L1154.18 802.43 L1154.35 802.45 L1154.51 802.47 L1154.68 802.50 L1154.84 802.52 L1155.01 802.54 L1155.17 802.56 L1155.34 802.58 L1155.50 802.60 M1158.46 802.97 L1158.63 802.99 L1158.79 803.01 L1158.96 803.03 L1159.12 803.05 L1159.29 803.07 L1159.45 803.09 L1159.62 803.11 L1159.78 803.13 L1159.95 803.15 L1160.11 803.17 L1160.28 803.19 L1160.44 803.21 L1160.60 803.23 L1160.77 803.25 L1160.93 803.27 L1161.10 803.29 L1161.26 803.31 L1161.43 803.33 L1161.59 803.36 L1161.76 803.38 L1161.92 803.40 L1162.09 803.42 L1162.25 803.44 L1162.42 803.46 L1162.58 803.48 L1162.74 803.50 L1162.91 803.52 L1163.07 803.54 L1163.24 803.56 L1163.40 803.58 L1163.57 803.60 L1163.73 803.62 L1163.90 803.64 L1164.06 803.66 L1164.23 803.68 L1164.39 803.70 L1164.56 803.72 L1164.72 803.74 L1164.89 803.76 L1165.05 803.78 L1165.21 803.80 L1165.38 803.82 L1165.54 803.84 L1165.71 803.86 L1165.87 803.88 L1166.04 803.90 L1166.20 803.92 L1166.37 803.94 L1166.53 803.96 L1166.70 803.98 L1166.86 804.00 L1167.03 804.02 L1167.19 804.04 L1167.35 804.06 L1167.52 804.08 L1167.68 804.10 L1167.85 804.12 L1168.01 804.14 L1168.18 804.16 L1168.34 804.19 L1168.51 804.21 L1168.67 804.23 L1168.84 804.25 M1171.80 804.61 L1171.96 804.63 L1172.13 804.65 L1172.29 804.67 L1172.46 804.69 L1172.62 804.71 L1172.79 804.73 L1172.95 804.75 L1173.12 804.77 L1173.28 804.79 L1173.45 804.81 L1173.61 804.83 L1173.77 804.85 L1173.94 804.87 L1174.10 804.89 L1174.27 804.91 L1174.43 804.93 L1174.60 804.95 L1174.76 804.97 L1174.93 804.99 L1175.09 805.01 L1175.26 805.03 L1175.42 805.05 L1175.59 805.07 L1175.75 805.09 L1175.91 805.11 L1176.08 805.12 L1176.24 805.14 L1176.41 805.16 L1176.57 805.18 L1176.74 805.20 L1176.90 805.22 L1177.07 805.24 L1177.23 805.26 L1177.40 805.28 L1177.56 805.30 L1177.73 805.32 L1177.89 805.34 L1178.06 805.36 L1178.22 805.38 L1178.38 805.40 L1178.55 805.42 L1178.71 805.44 L1178.88 805.46 L1179.04 805.48 L1179.21 805.50 L1179.37 805.52 L1179.54 805.54 L1179.70 805.56 L1179.87 805.58 L1180.03 805.60 L1180.20 805.62 L1180.36 805.64 L1180.52 805.66 L1180.69 805.68 L1180.85 805.70 L1181.02 805.72 L1181.18 805.74 L1181.35 805.76 L1181.51 805.78 L1181.68 805.80 L1181.84 805.82 L1182.01 805.84 L1182.17 805.86 M1185.13 806.21 L1185.30 806.23 L1185.46 806.25 L1185.63 806.27 L1185.79 806.29 L1185.96 806.31 L1186.12 806.33 L1186.29 806.35 L1186.45 806.37 L1186.62 806.39 L1186.78 806.41 L1186.94 806.42 L1187.11 806.44 L1187.27 806.46 L1187.44 806.48 L1187.60 806.50 L1187.77 806.52 L1187.93 806.54 L1188.10 806.56 L1188.26 806.58 L1188.43 806.60 L1188.59 806.62 L1188.76 806.64 L1188.92 806.66 L1189.08 806.68 L1189.25 806.70 L1189.41 806.72 L1189.58 806.74 L1189.74 806.76 L1189.91 806.78 L1190.07 806.79 L1190.24 806.81 L1190.40 806.83 L1190.57 806.85 L1190.73 806.87 L1190.90 806.89 L1191.06 806.91 L1191.23 806.93 L1191.39 806.95 L1191.55 806.97 L1191.72 806.99 L1191.88 807.01 L1192.05 807.03 L1192.21 807.05 L1192.38 807.07 L1192.54 807.09 L1192.71 807.10 L1192.87 807.12 L1193.04 807.14 L1193.20 807.16 L1193.37 807.18 L1193.53 807.20 L1193.69 807.22 L1193.86 807.24 L1194.02 807.26 L1194.19 807.28 L1194.35 807.30 L1194.52 807.32 L1194.68 807.34 L1194.85 807.36 L1195.01 807.38 L1195.18 807.39 L1195.34 807.41 L1195.51 807.43 M1198.47 807.78 L1198.63 807.80 L1198.80 807.82 L1198.96 807.84 L1199.13 807.86 L1199.29 807.87 L1199.46 807.89 L1199.62 807.91 L1199.79 807.93 L1199.95 807.95 L1200.11 807.97 L1200.28 807.99 L1200.44 808.01 L1200.61 808.03 L1200.77 808.05 L1200.94 808.07 L1201.10 808.08 L1201.27 808.10 L1201.43 808.12 L1201.60 808.14 L1201.76 808.16 L1201.93 808.18 L1202.09 808.20 L1202.25 808.22 L1202.42 808.24 L1202.58 808.26 L1202.75 808.28 L1202.91 808.29 L1203.08 808.31 L1203.24 808.33 L1203.41 808.35 L1203.57 808.37 L1203.74 808.39 L1203.90 808.41 L1204.07 808.43 L1204.23 808.45 L1204.40 808.47 L1204.56 808.48 L1204.72 808.50 L1204.89 808.52 L1205.05 808.54 L1205.22 808.56 L1205.38 808.58 L1205.55 808.60 L1205.71 808.62 L1205.88 808.64 L1206.04 808.66 L1206.21 808.67 L1206.37 808.69 L1206.54 808.71 L1206.70 808.73 L1206.86 808.75 L1207.03 808.77 L1207.19 808.79 L1207.36 808.81 L1207.52 808.83 L1207.69 808.84 L1207.85 808.86 L1208.02 808.88 L1208.18 808.90 L1208.35 808.92 L1208.51 808.94 L1208.68 808.96 L1208.84 808.98 M1211.80 809.31 L1211.97 809.33 L1212.13 809.35 L1212.30 809.37 L1212.46 809.39 L1212.63 809.41 L1212.79 809.43 L1212.96 809.45 L1213.12 809.46 L1213.28 809.48 L1213.45 809.50 L1213.61 809.52 L1213.78 809.54 L1213.94 809.56 L1214.11 809.58 L1214.27 809.60 L1214.44 809.61 L1214.60 809.63 L1214.77 809.65 L1214.93 809.67 L1215.10 809.69 L1215.26 809.71 L1215.42 809.73 L1215.59 809.75 L1215.75 809.76 L1215.92 809.78 L1216.08 809.80 L1216.25 809.82 L1216.41 809.84 L1216.58 809.86 L1216.74 809.88 L1216.91 809.89 L1217.07 809.91 L1217.24 809.93 L1217.40 809.95 L1217.57 809.97 L1217.73 809.99 L1217.89 810.01 L1218.06 810.02 L1218.22 810.04 L1218.39 810.06 L1218.55 810.08 L1218.72 810.10 L1218.88 810.12 L1219.05 810.14 L1219.21 810.15 L1219.38 810.17 L1219.54 810.19 L1219.71 810.21 L1219.87 810.23 L1220.03 810.25 L1220.20 810.27 L1220.36 810.28 L1220.53 810.30 L1220.69 810.32 L1220.86 810.34 L1221.02 810.36 L1221.19 810.38 L1221.35 810.40 L1221.52 810.41 L1221.68 810.43 L1221.85 810.45 L1222.01 810.47 L1222.17 810.49 M1225.14 810.82 L1225.30 810.84 L1225.47 810.86 L1225.60 810.87" fill="none" stroke="#8a8a8a" stroke-width="2.2" stroke-linejoin="round"/>
</svg>
<div class="t" style="left:465px;width:60px;text-align:right;top:803.0px;color:#777">$0K</div>
<div class="t" style="left:465px;width:60px;text-align:right;top:728.9px;color:#777">$10K</div>
<div class="t" style="left:465px;width:60px;text-align:right;top:654.7px;color:#777">$20K</div>
<div class="t" style="left:465px;width:60px;text-align:right;top:580.6px;color:#777">$30K</div>
<div class="t" style="left:465px;width:60px;text-align:right;top:506.4px;color:#777">$40K</div>
<div class="t" style="left:465px;width:60px;text-align:right;top:432.3px;color:#777">$50K</div>
<div class="t" style="left:465px;width:60px;text-align:right;top:358.2px;color:#777">$60K</div>
<div class="t" style="left:465px;width:60px;text-align:right;top:284.0px;color:#777">$70K</div>
<div class="t" style="left:465px;width:60px;text-align:right;top:209.9px;color:#777">$80K</div>
<div class="t" style="left:537.1px;width:60px;text-align:center;top:855.5px;color:#777">0</div>
<div class="t" style="left:603.0px;width:60px;text-align:center;top:855.5px;color:#777">20</div>
<div class="t" style="left:668.8px;width:60px;text-align:center;top:855.5px;color:#777">40</div>
<div class="t" style="left:734.7px;width:60px;text-align:center;top:855.5px;color:#777">60</div>
<div class="t" style="left:800.5px;width:60px;text-align:center;top:855.5px;color:#777">80</div>
<div class="t" style="left:866.4px;width:60px;text-align:center;top:855.5px;color:#777">100</div>
<div class="t" style="left:932.2px;width:60px;text-align:center;top:855.5px;color:#777">120</div>
<div class="t" style="left:998.0px;width:60px;text-align:center;top:855.5px;color:#777">140</div>
<div class="t" style="left:1063.9px;width:60px;text-align:center;top:855.5px;color:#777">160</div>
<div class="t" style="left:1129.8px;width:60px;text-align:center;top:855.5px;color:#777">180</div>
<div class="t" style="left:1182.0px;width:60px;text-align:center;top:855.5px;color:#777">200</div>
<div class="t" style="left:711.5px;top:880px;color:#333;font-size:13.55px;-webkit-text-stroke:0.25px #333">Ease of biz index (1=most business-friendly regulations)</div>
<div class="t" style="left:424.5px;top:490px;width:90px;text-align:center;transform:rotate(-90deg);color:#333;font-size:12.8px;-webkit-text-stroke:0.25px #333">GDP per Capita</div>
<div class="t" style="left:691px;top:192px;width:88px;transform:rotate(-90deg);color:#777;font-size:13.5px">Lower Quartile</div>
<div class="t" style="left:840px;top:192px;width:90px;transform:rotate(-90deg);color:#777;font-size:13.5px;text-align:right">Median</div>
<div class="t" style="left:1002px;top:191px;width:90px;transform:rotate(-90deg);color:#777;font-size:13.5px;text-align:right">Upper Quartile</div>
<!-- tab bar -->
<div class="a" style="left:27px;top:932px;width:1537px;height:33px;background:#e6e6e6;border-top:1px solid #dadada;border-bottom:1px solid #d6d6d6"></div>
<div class="a" style="left:27px;top:965px;width:1537px;height:22px;background:#ebebeb"></div>
<div class="tab" style="left:27px;width:140px;padding-left:26px">Data Source</div>
<svg class="a" style="left:34px;top:940px" width="14" height="18"><path d="M4 4.5v7.5c0 1 1.3 1.7 3 1.7s3 -.7 3 -1.7v-7.5M4 4.5c0 -1 1.3 -1.7 3 -1.7s3 .7 3 1.7s-1.3 1.7 -3 1.7s-3 -.7 -3 -1.7" fill="none" stroke="#666" stroke-width="1.1"/></svg>
<div class="tab" style="left:167px;width:81px;padding-left:6px">Population</div>
<div class="tab" style="left:248px;width:118px;padding-left:6px">Health Indicators</div>
<div class="tab" style="left:366px;width:86px;padding-left:6px">Care Spend</div>
<div class="tab" style="left:452px;width:83px;padding-left:6px">Technology</div>
<div class="tab" style="left:535px;width:71px;padding-left:6px">Economy</div>
<div class="tab" style="left:606px;width:81px;padding-left:25px">Tourism</div>
<div class="tab" style="left:687px;width:88px;padding-left:26px">Business</div>
<div class="tab" style="left:775px;width:192px;padding-left:6px;background:#fbfbfb;color:#333;font-weight:bold;font-size:12.7px;top:933px;height:32px">Ease of Biz Correlation Sheet</div>
<div class="tab" style="left:967px;width:137px;padding-left:25px">Global Indicators</div>
<div class="tab" style="left:1104px;width:34px"></div>
<div class="tab" style="left:1138px;width:34px"></div>
<div class="tab" style="left:1172px;width:34px"></div>
<svg class="a" style="left:0;top:930px" width="1600" height="60">
 <g fill="none" stroke="#666" stroke-width="1.1">
  <rect x="614.5" y="12.5" width="11" height="11"/><path d="M620 12.5v11M614.5 18h11"/>
  <rect x="696.5" y="12.5" width="11" height="11"/><path d="M702 12.5v11M696.5 18h11"/>
  <path d="M975.5 13.5l3.2 -1.2l3.2 1.2l3.2 -1.2v10.5l-3.2 1.2l-3.2 -1.2l-3.2 1.2z M981.9 13.5v10.5"/>
  <path d="M1122 18.5v-6h-10.5v11h6"/><path d="M1114.5 20v1.5M1117 17v4.5M1119.5 18.5v3"/>
  <path d="M1156 18.5v-6h-10.5v11h6M1150.8 12.5v11M1145.5 18h10.5"/>
  <path d="M1190 19v-6.5l-4 -1.5l-4 1.5l-2.5 -1.5v10.5l2.5 1.5l3 -1"/>
 </g>
 <path d="M1125.5 17v8M1121.5 21h8M1159.5 17v8M1155.5 21h8M1193.5 17v8M1189.5 21h8" stroke="#333" stroke-width="1.8"/>
 <!-- status separators -->
 <path d="M1070.5 35v22M1205.5 35v22M1234.5 35v22M1263.5 35v22M1313.5 35v22M1406.5 35v22M1482.5 35v22" stroke="#d8d8d8" stroke-width="1"/>
 <g fill="#c4c4c4">
  <path d="M1414.5 41.5h1.2v7h-1.2zM1421.5 41.5v7l-5 -3.5z"/>
  <path d="M1438 41.5v7l-4.5 -3.5z"/>
  <path d="M1450 41.5v7l4.5 -3.5z"/>
  <path d="M1466 41.5v7l5 -3.5zM1471.5 41.5h1.2v7h-1.2z"/>
 </g>
 <g fill="#bbb">
  <rect x="1492" y="40" width="3" height="3"/><rect x="1496" y="40" width="3" height="3"/><rect x="1500" y="40" width="3" height="3"/>
  <rect x="1492" y="44" width="3" height="3"/><rect x="1496" y="44" width="3" height="3"/><rect x="1500" y="44" width="3" height="3"/>
  <rect x="1492" y="48" width="3" height="3"/><rect x="1496" y="48" width="3" height="3"/><rect x="1500" y="48" width="3" height="3"/>
  <rect x="1514" y="40" width="11" height="6"/><rect x="1514" y="48" width="3" height="3"/><rect x="1518" y="48" width="3" height="3"/><rect x="1522" y="48" width="3" height="3"/>
 </g>
 <rect x="1537" y="40.5" width="11.5" height="11.5" fill="#666"/>
</svg>
<div class="t" style="left:41px;top:969px;font-size:11.2px;line-height:14px;color:#333">183 marks</div>
<div class="t" style="left:111px;top:969px;font-size:11.2px;line-height:14px;color:#333">1 row by 1 column</div>
<div class="t" style="left:217px;top:969px;font-size:11px;line-height:14px;color:#333">SUM of AVG(Ease of Business): 17,423</div>
<div class="t" style="left:1339px;top:969px;font-size:11.2px;line-height:14px;color:#333">FF: +0 -0</div>
</div>
</body></html>
